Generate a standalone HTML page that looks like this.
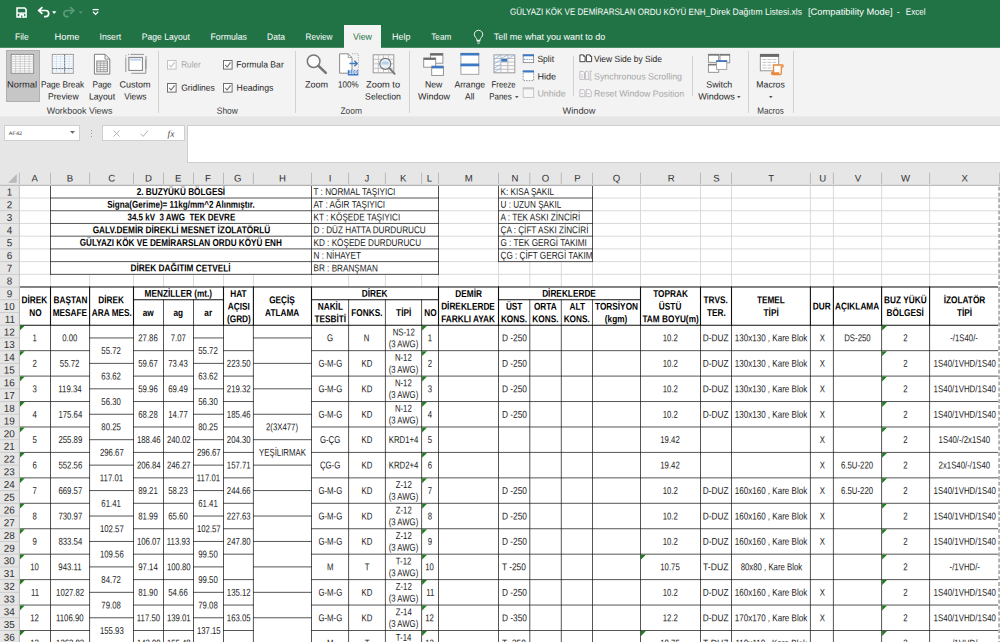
<!DOCTYPE html>
<html><head><meta charset="utf-8"><title>Excel</title>
<style>
html,body{margin:0;padding:0;}
body{width:1000px;height:642px;overflow:hidden;position:relative;background:#e6e6e6;font-family:"Liberation Sans",sans-serif;}
div{box-sizing:border-box;}
svg{position:absolute;overflow:visible;}
</style></head><body>
<div style="position:absolute;left:0.00px;top:0.00px;width:1000.00px;height:47.00px;background:#217346;"></div>
<div style="position:absolute;left:510px;top:1px;width:400px;height:20px;text-align:left;font-size:9.0px;line-height:20px;color:#fff;white-space:pre;"><span style="display:inline-block;transform:translate(0.00px,0.80px) scaleX(0.8918) rotate(0.03deg);transform-origin:left center">GÜLYAZI KÖK VE DEMİRARSLAN ORDU KÖYÜ ENH</span></div>
<div style="position:absolute;left:705px;top:1px;width:400px;height:20px;text-align:left;font-size:9.0px;line-height:20px;color:#fff;white-space:pre;"><span style="display:inline-block;transform:translate(0.50px,0.80px) scaleX(0.9505) rotate(0.03deg);transform-origin:left center">_Direk Dağıtım Listesi.xls</span></div>
<div style="position:absolute;left:808px;top:1px;width:400px;height:20px;text-align:left;font-size:9.0px;line-height:20px;color:#fff;white-space:pre;"><span style="display:inline-block;transform:translate(0.00px,0.80px) scaleX(1.0365) rotate(0.03deg);transform-origin:left center">[Compatibility Mode]</span></div>
<div style="position:absolute;left:896px;top:1px;width:400px;height:20px;text-align:left;font-size:9.0px;line-height:20px;color:#fff;white-space:pre;"><span style="display:inline-block;transform:translate(0.80px,0.80px) scaleX(1.0000) rotate(0.03deg);transform-origin:left center">-</span></div>
<div style="position:absolute;left:905px;top:1px;width:400px;height:20px;text-align:left;font-size:9.0px;line-height:20px;color:#fff;white-space:pre;"><span style="display:inline-block;transform:translate(0.80px,0.80px) scaleX(0.8951) rotate(0.03deg);transform-origin:left center">Excel</span></div>
<div style="position:absolute;left:15px;top:26px;width:400px;height:20px;text-align:left;font-size:9.0px;line-height:20px;color:#fff;white-space:pre;"><span style="display:inline-block;transform:translate(0.00px,0.70px) scaleX(0.9482) rotate(0.03deg);transform-origin:left center">File</span></div>
<div style="position:absolute;left:54px;top:26px;width:400px;height:20px;text-align:left;font-size:9.0px;line-height:20px;color:#fff;white-space:pre;"><span style="display:inline-block;transform:translate(0.50px,0.70px) scaleX(1.0414) rotate(0.03deg);transform-origin:left center">Home</span></div>
<div style="position:absolute;left:99px;top:26px;width:400px;height:20px;text-align:left;font-size:9.0px;line-height:20px;color:#fff;white-space:pre;"><span style="display:inline-block;transform:translate(0.50px,0.70px) scaleX(0.9664) rotate(0.03deg);transform-origin:left center">Insert</span></div>
<div style="position:absolute;left:141px;top:26px;width:400px;height:20px;text-align:left;font-size:9.0px;line-height:20px;color:#fff;white-space:pre;"><span style="display:inline-block;transform:translate(0.75px,0.70px) scaleX(0.9547) rotate(0.03deg);transform-origin:left center">Page Layout</span></div>
<div style="position:absolute;left:210px;top:26px;width:400px;height:20px;text-align:left;font-size:9.0px;line-height:20px;color:#fff;white-space:pre;"><span style="display:inline-block;transform:translate(0.50px,0.70px) scaleX(0.9732) rotate(0.03deg);transform-origin:left center">Formulas</span></div>
<div style="position:absolute;left:267px;top:26px;width:400px;height:20px;text-align:left;font-size:9.0px;line-height:20px;color:#fff;white-space:pre;"><span style="display:inline-block;transform:translate(0.00px,0.70px) scaleX(0.9469) rotate(0.03deg);transform-origin:left center">Data</span></div>
<div style="position:absolute;left:305px;top:26px;width:400px;height:20px;text-align:left;font-size:9.0px;line-height:20px;color:#fff;white-space:pre;"><span style="display:inline-block;transform:translate(0.50px,0.70px) scaleX(0.9150) rotate(0.03deg);transform-origin:left center">Review</span></div>
<div style="position:absolute;left:392px;top:26px;width:400px;height:20px;text-align:left;font-size:9.0px;line-height:20px;color:#fff;white-space:pre;"><span style="display:inline-block;transform:translate(0.00px,0.70px) scaleX(0.9995) rotate(0.03deg);transform-origin:left center">Help</span></div>
<div style="position:absolute;left:431px;top:26px;width:400px;height:20px;text-align:left;font-size:9.0px;line-height:20px;color:#fff;white-space:pre;"><span style="display:inline-block;transform:translate(0.25px,0.70px) scaleX(0.9088) rotate(0.03deg);transform-origin:left center">Team</span></div>
<div style="position:absolute;left:344.00px;top:25.00px;width:37.00px;height:23.00px;background:#f3f3f3;"></div>
<div style="position:absolute;left:353px;top:26px;width:400px;height:20px;text-align:left;font-size:9.0px;line-height:20px;color:#217346;white-space:pre;"><span style="display:inline-block;transform:translate(0.00px,0.70px) scaleX(0.9822) rotate(0.03deg);transform-origin:left center">View</span></div>
<div style="position:absolute;left:493px;top:26px;width:400px;height:20px;text-align:left;font-size:9.0px;line-height:20px;color:#fff;white-space:pre;"><span style="display:inline-block;transform:translate(0.75px,0.70px) scaleX(1.0040) rotate(0.03deg);transform-origin:left center">Tell me what you want to do</span></div>
<svg style="left:0.00px;top:24.00px" width="600" height="24" viewBox="0 23.3 600 24"><path d="M476.8 39.6v-1c0-1.3-2.5-2.4-2.5-4.8a4.2 4.2 0 0 1 8.4 0c0 2.4-2.5 3.5-2.5 4.8v1z" fill="none" stroke="#eef5f0" stroke-width="1"/><path d="M476.8 40.3h3.4" stroke="#fff" stroke-width="1.3"/><path d="M477.3 42.4h2.4" stroke="#fff" stroke-width="0.9"/></svg>
<svg style="left:0.00px;top:0.00px" width="110" height="24" viewBox="0 0 110 24"><path d="M17 7.9h7.6l1.5 1.5v7.7H17z" fill="none" stroke="#fff" stroke-width="1.5"/><path d="M17 13.1h9" stroke="#fff" stroke-width="1.4"/><path d="M19.4 8v3.2h4.8V8" fill="none" stroke="#fff" stroke-width="0"/><rect x="19.3" y="13.6" width="4.9" height="3.9" fill="#fff"/><rect x="21.2" y="15.4" width="1.2" height="2.2" fill="#217346"/><path d="M42.4 7.2L38.7 10.5l3.7 3.3" fill="none" stroke="#fff" stroke-width="1.7"/><path d="M39 10.5h6.6a3.1 3.1 0 0 1 0 6.2h-1.6" fill="none" stroke="#fff" stroke-width="1.7"/><path d="M52 11.2h4.4l-2.2 2.7z" fill="#fff"/><path d="M70.2 7.2l3.7 3.3-3.7 3.3" fill="none" stroke="#5b9b7a" stroke-width="1.7"/><path d="M73.6 10.5H67a3.1 3.1 0 0 0 0 6.2h1.6" fill="none" stroke="#5b9b7a" stroke-width="1.7"/><path d="M78.6 11.2H83l-2.2 2.7z" fill="#4f9270"/><path d="M92.6 9.6h6" stroke="#fff" stroke-width="1.3"/><path d="M93 11.8l2.6 2.6 2.6-2.6" fill="none" stroke="#fff" stroke-width="1.25"/></svg>
<div style="position:absolute;left:0.00px;top:47.00px;width:1000.00px;height:69.00px;background:#f3f3f3;"></div>
<div style="position:absolute;left:0.00px;top:47.00px;width:1000.00px;height:1.00px;background:#4b8d69;"></div>
<div style="position:absolute;left:344.00px;top:47.00px;width:37.00px;height:1.00px;background:#f3f3f3;"></div>
<div style="position:absolute;left:0.00px;top:116.00px;width:1000.00px;height:1.00px;background:#eaeaea;"></div>
<div style="position:absolute;left:6.00px;top:50.00px;width:33.60px;height:51.60px;background:#c6c6c6;border:1px solid #b0b0b0;"></div>
<div style="position:absolute;left:-178px;top:74px;width:400px;height:20px;text-align:center;font-size:9.0px;line-height:20px;color:#262626;white-space:pre;"><span style="display:inline-block;transform:translate(0.60px,0.50px) scaleX(1.0344) rotate(0.03deg);transform-origin:center center">Normal</span></div>
<div style="position:absolute;left:-137px;top:74px;width:400px;height:20px;text-align:center;font-size:9.0px;line-height:20px;color:#262626;white-space:pre;"><span style="display:inline-block;transform:translate(0.00px,0.50px) scaleX(0.9186) rotate(0.03deg);transform-origin:center center">Page Break</span></div>
<div style="position:absolute;left:-137px;top:86px;width:400px;height:20px;text-align:center;font-size:9.0px;line-height:20px;color:#262626;white-space:pre;"><span style="display:inline-block;transform:translate(0.30px,0.40px) scaleX(0.9560) rotate(0.03deg);transform-origin:center center">Preview</span></div>
<div style="position:absolute;left:-98px;top:74px;width:400px;height:20px;text-align:center;font-size:9.0px;line-height:20px;color:#262626;white-space:pre;"><span style="display:inline-block;transform:translate(0.50px,0.50px) scaleX(0.9040) rotate(0.03deg);transform-origin:center center">Page</span></div>
<div style="position:absolute;left:-98px;top:86px;width:400px;height:20px;text-align:center;font-size:9.0px;line-height:20px;color:#262626;white-space:pre;"><span style="display:inline-block;transform:translate(0.50px,0.40px) scaleX(0.9697) rotate(0.03deg);transform-origin:center center">Layout</span></div>
<div style="position:absolute;left:-65px;top:74px;width:400px;height:20px;text-align:center;font-size:9.0px;line-height:20px;color:#262626;white-space:pre;"><span style="display:inline-block;transform:translate(0.50px,0.50px) scaleX(0.9998) rotate(0.03deg);transform-origin:center center">Custom</span></div>
<div style="position:absolute;left:-65px;top:86px;width:400px;height:20px;text-align:center;font-size:9.0px;line-height:20px;color:#262626;white-space:pre;"><span style="display:inline-block;transform:translate(0.50px,0.40px) scaleX(0.9310) rotate(0.03deg);transform-origin:center center">Views</span></div>
<div style="position:absolute;left:-121px;top:100px;width:400px;height:20px;text-align:center;font-size:9.0px;line-height:20px;color:#383838;white-space:pre;"><span style="display:inline-block;transform:translate(0.20px,0.80px) scaleX(0.9836) rotate(0.03deg);transform-origin:center center">Workbook Views</span></div>
<div style="position:absolute;left:158.40px;top:51.00px;width:1.00px;height:62.00px;background:#d2d2d2;"></div>
<svg style="left:167.20px;top:59.50px" width="9.6" height="9.6" viewBox="0 0 10 10"><rect x="0.5" y="0.5" width="9" height="9" fill="#fdfdfd" stroke="#c0c0c0" stroke-width="1"/><path d="M2.3 5.2l2 2.1 3.6-4.8" fill="none" stroke="#c0c0c0" stroke-width="1.1"/></svg>
<svg style="left:167.20px;top:82.70px" width="9.6" height="9.6" viewBox="0 0 10 10"><rect x="0.5" y="0.5" width="9" height="9" fill="#fdfdfd" stroke="#6a6a6a" stroke-width="1"/><path d="M2.3 5.2l2 2.1 3.6-4.8" fill="none" stroke="#6a6a6a" stroke-width="1.1"/></svg>
<svg style="left:223.00px;top:59.50px" width="9.6" height="9.6" viewBox="0 0 10 10"><rect x="0.5" y="0.5" width="9" height="9" fill="#fdfdfd" stroke="#6a6a6a" stroke-width="1"/><path d="M2.3 5.2l2 2.1 3.6-4.8" fill="none" stroke="#6a6a6a" stroke-width="1.1"/></svg>
<svg style="left:223.00px;top:82.70px" width="9.6" height="9.6" viewBox="0 0 10 10"><rect x="0.5" y="0.5" width="9" height="9" fill="#fdfdfd" stroke="#6a6a6a" stroke-width="1"/><path d="M2.3 5.2l2 2.1 3.6-4.8" fill="none" stroke="#6a6a6a" stroke-width="1.1"/></svg>
<div style="position:absolute;left:-9px;top:54px;width:400px;height:20px;text-align:center;font-size:9.0px;line-height:20px;color:#a6a6a6;white-space:pre;"><span style="display:inline-block;transform:translate(0.20px,0.50px) scaleX(0.9114) rotate(0.03deg);transform-origin:center center">Ruler</span></div>
<div style="position:absolute;left:-2px;top:77px;width:400px;height:20px;text-align:center;font-size:9.0px;line-height:20px;color:#262626;white-space:pre;"><span style="display:inline-block;transform:translate(0.20px,0.70px) scaleX(0.9462) rotate(0.03deg);transform-origin:center center">Gridlines</span></div>
<div style="position:absolute;left:60px;top:54px;width:400px;height:20px;text-align:center;font-size:9.0px;line-height:20px;color:#262626;white-space:pre;"><span style="display:inline-block;transform:translate(0.30px,0.50px) scaleX(0.9574) rotate(0.03deg);transform-origin:center center">Formula Bar</span></div>
<div style="position:absolute;left:55px;top:77px;width:400px;height:20px;text-align:center;font-size:9.0px;line-height:20px;color:#262626;white-space:pre;"><span style="display:inline-block;transform:translate(0.00px,0.70px) scaleX(0.9678) rotate(0.03deg);transform-origin:center center">Headings</span></div>
<div style="position:absolute;left:27px;top:100px;width:400px;height:20px;text-align:center;font-size:9.0px;line-height:20px;color:#383838;white-space:pre;"><span style="display:inline-block;transform:translate(0.10px,0.80px) scaleX(0.9328) rotate(0.03deg);transform-origin:center center">Show</span></div>
<div style="position:absolute;left:294.70px;top:51.00px;width:1.00px;height:62.00px;background:#d2d2d2;"></div>
<div style="position:absolute;left:117px;top:74px;width:400px;height:20px;text-align:center;font-size:9.0px;line-height:20px;color:#262626;white-space:pre;"><span style="display:inline-block;transform:translate(0.00px,0.50px) scaleX(1.0085) rotate(0.03deg);transform-origin:center center">Zoom</span></div>
<div style="position:absolute;left:148px;top:74px;width:400px;height:20px;text-align:center;font-size:9.0px;line-height:20px;color:#262626;white-space:pre;"><span style="display:inline-block;transform:translate(0.80px,0.50px) scaleX(0.8863) rotate(0.03deg);transform-origin:center center">100%</span></div>
<div style="position:absolute;left:183px;top:74px;width:400px;height:20px;text-align:center;font-size:9.0px;line-height:20px;color:#262626;white-space:pre;"><span style="display:inline-block;transform:translate(0.60px,0.50px) scaleX(1.0300) rotate(0.03deg);transform-origin:center center">Zoom to</span></div>
<div style="position:absolute;left:183px;top:86px;width:400px;height:20px;text-align:center;font-size:9.0px;line-height:20px;color:#262626;white-space:pre;"><span style="display:inline-block;transform:translate(0.50px,0.40px) scaleX(0.9670) rotate(0.03deg);transform-origin:center center">Selection</span></div>
<div style="position:absolute;left:151px;top:100px;width:400px;height:20px;text-align:center;font-size:9.0px;line-height:20px;color:#383838;white-space:pre;"><span style="display:inline-block;transform:translate(0.70px,0.80px) scaleX(0.9303) rotate(0.03deg);transform-origin:center center">Zoom</span></div>
<div style="position:absolute;left:409.10px;top:51.00px;width:1.00px;height:62.00px;background:#d2d2d2;"></div>
<div style="position:absolute;left:233px;top:74px;width:400px;height:20px;text-align:center;font-size:9.0px;line-height:20px;color:#262626;white-space:pre;"><span style="display:inline-block;transform:translate(0.70px,0.50px) scaleX(0.9664) rotate(0.03deg);transform-origin:center center">New</span></div>
<div style="position:absolute;left:234px;top:86px;width:400px;height:20px;text-align:center;font-size:9.0px;line-height:20px;color:#262626;white-space:pre;"><span style="display:inline-block;transform:translate(0.00px,0.40px) scaleX(0.9997) rotate(0.03deg);transform-origin:center center">Window</span></div>
<div style="position:absolute;left:269px;top:74px;width:400px;height:20px;text-align:center;font-size:9.0px;line-height:20px;color:#262626;white-space:pre;"><span style="display:inline-block;transform:translate(0.70px,0.50px) scaleX(0.9558) rotate(0.03deg);transform-origin:center center">Arrange</span></div>
<div style="position:absolute;left:269px;top:86px;width:400px;height:20px;text-align:center;font-size:9.0px;line-height:20px;color:#262626;white-space:pre;"><span style="display:inline-block;transform:translate(0.70px,0.40px) scaleX(0.9398) rotate(0.03deg);transform-origin:center center">All</span></div>
<div style="position:absolute;left:303px;top:74px;width:400px;height:20px;text-align:center;font-size:9.0px;line-height:20px;color:#262626;white-space:pre;"><span style="display:inline-block;transform:translate(0.60px,0.50px) scaleX(0.8569) rotate(0.03deg);transform-origin:center center">Freeze</span></div>
<div style="position:absolute;left:300px;top:86px;width:400px;height:20px;text-align:center;font-size:9.0px;line-height:20px;color:#262626;white-space:pre;"><span style="display:inline-block;transform:translate(0.70px,0.40px) scaleX(0.8857) rotate(0.03deg);transform-origin:center center">Panes</span></div>
<svg style="left:514.50px;top:95.50px" width="4" height="3" viewBox="0 0 4 3"><path d="M0 0h3.6L1.8 2.2z" fill="#555"/></svg>
<div style="position:absolute;left:537px;top:48px;width:400px;height:20px;text-align:left;font-size:9.0px;line-height:20px;color:#262626;white-space:pre;"><span style="display:inline-block;transform:translate(0.40px,0.90px) scaleX(0.9481) rotate(0.03deg);transform-origin:left center">Split</span></div>
<div style="position:absolute;left:537px;top:66px;width:400px;height:20px;text-align:left;font-size:9.0px;line-height:20px;color:#262626;white-space:pre;"><span style="display:inline-block;transform:translate(0.40px,0.40px) scaleX(1.0049) rotate(0.03deg);transform-origin:left center">Hide</span></div>
<div style="position:absolute;left:537px;top:83px;width:400px;height:20px;text-align:left;font-size:9.0px;line-height:20px;color:#a6a6a6;white-space:pre;"><span style="display:inline-block;transform:translate(0.40px,0.60px) scaleX(0.9888) rotate(0.03deg);transform-origin:left center">Unhide</span></div>
<div style="position:absolute;left:573.10px;top:56.00px;width:1.00px;height:40.00px;background:#d2d2d2;"></div>
<div style="position:absolute;left:594px;top:48px;width:400px;height:20px;text-align:left;font-size:9.0px;line-height:20px;color:#262626;white-space:pre;"><span style="display:inline-block;transform:translate(0.00px,0.90px) scaleX(0.9395) rotate(0.03deg);transform-origin:left center">View Side by Side</span></div>
<div style="position:absolute;left:594px;top:66px;width:400px;height:20px;text-align:left;font-size:9.0px;line-height:20px;color:#a6a6a6;white-space:pre;"><span style="display:inline-block;transform:translate(0.00px,0.40px) scaleX(0.9828) rotate(0.03deg);transform-origin:left center">Synchronous Scrolling</span></div>
<div style="position:absolute;left:594px;top:83px;width:400px;height:20px;text-align:left;font-size:9.0px;line-height:20px;color:#a6a6a6;white-space:pre;"><span style="display:inline-block;transform:translate(0.00px,0.60px) scaleX(0.9726) rotate(0.03deg);transform-origin:left center">Reset Window Position</span></div>
<div style="position:absolute;left:378px;top:100px;width:400px;height:20px;text-align:center;font-size:9.0px;line-height:20px;color:#383838;white-space:pre;"><span style="display:inline-block;transform:translate(0.90px,0.80px) scaleX(1.0310) rotate(0.03deg);transform-origin:center center">Window</span></div>
<div style="position:absolute;left:692.10px;top:56.00px;width:1.00px;height:40.00px;background:#d2d2d2;"></div>
<div style="position:absolute;left:519px;top:74px;width:400px;height:20px;text-align:center;font-size:9.0px;line-height:20px;color:#262626;white-space:pre;"><span style="display:inline-block;transform:translate(0.00px,0.50px) scaleX(0.9808) rotate(0.03deg);transform-origin:center center">Switch</span></div>
<div style="position:absolute;left:516px;top:86px;width:400px;height:20px;text-align:center;font-size:9.0px;line-height:20px;color:#262626;white-space:pre;"><span style="display:inline-block;transform:translate(0.30px,0.40px) scaleX(1.0025) rotate(0.03deg);transform-origin:center center">Windows</span></div>
<svg style="left:737.00px;top:95.50px" width="4" height="3" viewBox="0 0 4 3"><path d="M0 0h3.6L1.8 2.2z" fill="#555"/></svg>
<div style="position:absolute;left:747.90px;top:51.00px;width:1.00px;height:62.00px;background:#d2d2d2;"></div>
<div style="position:absolute;left:570px;top:74px;width:400px;height:20px;text-align:center;font-size:9.0px;line-height:20px;color:#262626;white-space:pre;"><span style="display:inline-block;transform:translate(0.80px,0.50px) scaleX(0.9626) rotate(0.03deg);transform-origin:center center">Macros</span></div>
<svg style="left:768.60px;top:95.50px" width="4" height="3" viewBox="0 0 4 3"><path d="M0 0h3.6L1.8 2.2z" fill="#555"/></svg>
<div style="position:absolute;left:570px;top:100px;width:400px;height:20px;text-align:center;font-size:9.0px;line-height:20px;color:#383838;white-space:pre;"><span style="display:inline-block;transform:translate(0.70px,0.80px) scaleX(0.9016) rotate(0.03deg);transform-origin:center center">Macros</span></div>
<div style="position:absolute;left:792.90px;top:51.00px;width:1.00px;height:62.00px;background:#d2d2d2;"></div>
<div style="position:absolute;left:4.00px;top:125.00px;width:76.00px;height:16.00px;background:#fff;border:1px solid #cfcfcf;"></div>
<div style="position:absolute;left:8px;top:122px;width:400px;height:20px;text-align:left;font-size:5.2px;line-height:20px;color:#444;white-space:pre;"><span style="display:inline-block;transform:translate(0.75px,0.99px) scaleX(1.0863) rotate(0.03deg);transform-origin:left center">AF42</span></div>
<svg style="left:69.60px;top:131.20px" width="6" height="4" viewBox="0 0 6 4"><path d="M0 0h5L2.5 2.8z" fill="#666"/></svg>
<div style="position:absolute;left:90.80px;top:129.50px;width:1.00px;height:1.00px;background:#9a9a9a;"></div>
<div style="position:absolute;left:90.80px;top:132.50px;width:1.00px;height:1.00px;background:#9a9a9a;"></div>
<div style="position:absolute;left:90.80px;top:135.50px;width:1.00px;height:1.00px;background:#9a9a9a;"></div>
<div style="position:absolute;left:102.00px;top:125.00px;width:83.00px;height:16.00px;background:#fff;border:1px solid #cfcfcf;"></div>
<svg style="left:112.50px;top:129.50px" width="7" height="7" viewBox="0 0 7 7"><path d="M0.5 0.5l6 6M6.5 0.5l-6 6" stroke="#b0b0b0" stroke-width="1"/></svg>
<svg style="left:139.50px;top:129.50px" width="9" height="7" viewBox="0 0 9 7"><path d="M0.5 3.8l2.6 2.6L8 0.6" fill="none" stroke="#b0b0b0" stroke-width="1"/></svg>
<div style="position:absolute;left:167px;top:123px;width:400px;height:20px;text-align:left;font-size:9.4px;line-height:20px;color:#444;white-space:pre;font-style:italic;font-family:'Liberation Serif',serif;"><span style="display:inline-block;transform:translate(0.60px,0.83px) scaleX(1.0000) rotate(0.03deg);transform-origin:left center">fx</span></div>
<div style="position:absolute;left:187.00px;top:125.00px;width:813.00px;height:38.00px;background:#fff;border:1px solid #cfcfcf;border-right:none;"></div>
<svg style="left:0;top:0" width="1000" height="130" viewBox="0 0 1000 130"><rect x="11.20" y="54.40" width="22.40" height="18.90" fill="#fff" stroke="#8c8c8c" stroke-width="1" /><line x1="15.68" y1="54.40" x2="15.68" y2="73.30" stroke="#c4c4c4" stroke-width="0.8" /><line x1="20.16" y1="54.40" x2="20.16" y2="73.30" stroke="#c4c4c4" stroke-width="0.8" /><line x1="24.64" y1="54.40" x2="24.64" y2="73.30" stroke="#c4c4c4" stroke-width="0.8" /><line x1="29.12" y1="54.40" x2="29.12" y2="73.30" stroke="#c4c4c4" stroke-width="0.8" /><line x1="11.20" y1="56.76" x2="33.60" y2="56.76" stroke="#c4c4c4" stroke-width="0.8" /><line x1="11.20" y1="59.12" x2="33.60" y2="59.12" stroke="#c4c4c4" stroke-width="0.8" /><line x1="11.20" y1="61.49" x2="33.60" y2="61.49" stroke="#c4c4c4" stroke-width="0.8" /><line x1="11.20" y1="63.85" x2="33.60" y2="63.85" stroke="#c4c4c4" stroke-width="0.8" /><line x1="11.20" y1="66.21" x2="33.60" y2="66.21" stroke="#c4c4c4" stroke-width="0.8" /><line x1="11.20" y1="68.58" x2="33.60" y2="68.58" stroke="#c4c4c4" stroke-width="0.8" /><line x1="11.20" y1="70.94" x2="33.60" y2="70.94" stroke="#c4c4c4" stroke-width="0.8" /><rect x="52.30" y="54.40" width="21.00" height="18.90" fill="#fff" stroke="#9a9a9a" stroke-width="1" /><line x1="56.50" y1="54.40" x2="56.50" y2="73.30" stroke="#cfdff2" stroke-width="0.8" /><line x1="60.70" y1="54.40" x2="60.70" y2="73.30" stroke="#cfdff2" stroke-width="0.8" /><line x1="64.90" y1="54.40" x2="64.90" y2="73.30" stroke="#cfdff2" stroke-width="0.8" /><line x1="69.10" y1="54.40" x2="69.10" y2="73.30" stroke="#cfdff2" stroke-width="0.8" /><line x1="52.30" y1="56.76" x2="73.30" y2="56.76" stroke="#cfdff2" stroke-width="0.8" /><line x1="52.30" y1="59.12" x2="73.30" y2="59.12" stroke="#cfdff2" stroke-width="0.8" /><line x1="52.30" y1="61.49" x2="73.30" y2="61.49" stroke="#cfdff2" stroke-width="0.8" /><line x1="52.30" y1="63.85" x2="73.30" y2="63.85" stroke="#cfdff2" stroke-width="0.8" /><line x1="52.30" y1="66.21" x2="73.30" y2="66.21" stroke="#cfdff2" stroke-width="0.8" /><line x1="52.30" y1="68.58" x2="73.30" y2="68.58" stroke="#cfdff2" stroke-width="0.8" /><line x1="52.30" y1="70.94" x2="73.30" y2="70.94" stroke="#cfdff2" stroke-width="0.8" /><line x1="64.60" y1="54.40" x2="64.60" y2="73.30" stroke="#666" stroke-width="0.9" stroke-dasharray="2.2 0.8"/><line x1="52.30" y1="68.60" x2="73.30" y2="68.60" stroke="#666" stroke-width="0.9" stroke-dasharray="2.2 0.8"/><path d="M94.4 54.3h10.6l4.8 4.8v15H94.4z" fill="#fff" stroke="#7d7d7d" stroke-width="1" /><path d="M105 54.3v4.8h4.8" fill="none" stroke="#7d7d7d" stroke-width="0.9" /><rect x="96.80" y="61.00" width="10.60" height="10.80" fill="#f0f0f0" stroke="#8a8a8a" stroke-width="1" /><line x1="100.33" y1="61.00" x2="100.33" y2="71.80" stroke="#a0a0a0" stroke-width="0.8" /><line x1="103.87" y1="61.00" x2="103.87" y2="71.80" stroke="#a0a0a0" stroke-width="0.8" /><line x1="96.80" y1="63.16" x2="107.40" y2="63.16" stroke="#a0a0a0" stroke-width="0.8" /><line x1="96.80" y1="65.32" x2="107.40" y2="65.32" stroke="#a0a0a0" stroke-width="0.8" /><line x1="96.80" y1="67.48" x2="107.40" y2="67.48" stroke="#a0a0a0" stroke-width="0.8" /><line x1="96.80" y1="69.64" x2="107.40" y2="69.64" stroke="#a0a0a0" stroke-width="0.8" /><path d="M125.8 55.2v1.2M125.8 57.5v14.5M128 54.4h1M130.5 54.4h13.5M146 56v13" fill="none" stroke="#8a8a8a" stroke-width="0.9" /><rect x="128.90" y="57.40" width="13.50" height="13.00" fill="#fff" stroke="#7d7d7d" stroke-width="1" /><rect x="130.30" y="58.60" width="10.70" height="2.00" fill="#bcd3ee" /><path d="M131.5 73.3h14.3v-14" fill="none" stroke="#8a8a8a" stroke-width="0.9" /><circle cx="313.6" cy="61.2" r="6.3" fill="#fbfbfb" stroke="#777" stroke-width="1.5"/><line x1="318.60" y1="66.00" x2="325.80" y2="72.90" stroke="#777" stroke-width="2.5" stroke-linecap="round"/><path d="M339.6 53.8h8.6l3.8 3.8v15.6h-12.4z" fill="#fff" stroke="#8a8a8a" stroke-width="1" /><path d="M348.2 53.8v3.8h3.8" fill="none" stroke="#8a8a8a" stroke-width="0.8" /><path d="M352 53.8h6.3v16" fill="none" stroke="#9a9a9a" stroke-width="0.8" stroke-dasharray="1.2 1.2"/><path d="M349.4 63.5h7.6M354.4 60.7l2.8 2.8-2.8 2.8" fill="none" stroke="#3c78c3" stroke-width="1.3" /><rect x="347.80" y="69.90" width="10.50" height="5.60" fill="#3c78c3" /><text x="353.05" y="74.4" font-family="Liberation Sans, sans-serif" font-size="5.4" font-weight="bold" fill="#fff" text-anchor="middle">100</text><rect x="373.20" y="54.80" width="20.60" height="18.00" fill="#fafafa" stroke="#9a9a9a" stroke-width="1" /><line x1="378.35" y1="54.80" x2="378.35" y2="72.80" stroke="#b5b5b5" stroke-width="0.8" /><line x1="383.50" y1="54.80" x2="383.50" y2="72.80" stroke="#b5b5b5" stroke-width="0.8" /><line x1="388.65" y1="54.80" x2="388.65" y2="72.80" stroke="#b5b5b5" stroke-width="0.8" /><line x1="373.20" y1="59.30" x2="393.80" y2="59.30" stroke="#b5b5b5" stroke-width="0.8" /><line x1="373.20" y1="63.80" x2="393.80" y2="63.80" stroke="#b5b5b5" stroke-width="0.8" /><line x1="373.20" y1="68.30" x2="393.80" y2="68.30" stroke="#b5b5b5" stroke-width="0.8" /><circle cx="385.3" cy="63.9" r="5.5" fill="#e9f0f8" stroke="#777" stroke-width="1.2"/><path d="M381.2 64.5a4.2 4.2 0 0 1 8.2 0z" fill="#b9d0ea" /><line x1="389.40" y1="68.20" x2="394.60" y2="73.80" stroke="#777" stroke-width="1.9" stroke-linecap="round"/><rect x="430.40" y="53.60" width="12.50" height="9.60" fill="#fff" stroke="#8a8a8a" stroke-width="0.9" /><rect x="430.40" y="53.30" width="12.50" height="2.30" fill="#6a6a6a" /><rect x="423.70" y="58.10" width="12.00" height="9.10" fill="#fff" stroke="#8a8a8a" stroke-width="0.9" /><rect x="423.70" y="57.80" width="12.00" height="2.10" fill="#6a6a6a" /><rect x="431.70" y="66.20" width="11.70" height="9.20" fill="#fff" stroke="#8a8a8a" stroke-width="0.9" /><rect x="431.70" y="65.90" width="11.70" height="2.50" fill="#3c78c3" /><rect x="460.90" y="53.30" width="17.90" height="21.00" fill="#fff" stroke="#9a9a9a" stroke-width="0.9" /><rect x="460.50" y="53.00" width="18.70" height="2.50" fill="#3c78c3" /><rect x="460.50" y="63.50" width="18.70" height="2.80" fill="#3c78c3" /><rect x="494.00" y="54.90" width="20.80" height="17.90" fill="#fbfbfb" stroke="#9a9a9a" stroke-width="1" /><line x1="500.93" y1="54.90" x2="500.93" y2="72.80" stroke="#b0b0b0" stroke-width="0.8" /><line x1="507.87" y1="54.90" x2="507.87" y2="72.80" stroke="#b0b0b0" stroke-width="0.8" /><line x1="494.00" y1="58.48" x2="514.80" y2="58.48" stroke="#b0b0b0" stroke-width="0.8" /><line x1="494.00" y1="62.06" x2="514.80" y2="62.06" stroke="#b0b0b0" stroke-width="0.8" /><line x1="494.00" y1="65.64" x2="514.80" y2="65.64" stroke="#b0b0b0" stroke-width="0.8" /><line x1="494.00" y1="69.22" x2="514.80" y2="69.22" stroke="#b0b0b0" stroke-width="0.8" /><path d="M494 59.5l6.9-4.6M494 64l6.9-4.6M494 68.5l6.9-4.6M494 72.5l6.9-4.6M501 58.5l6.9-3.6M508 58.5l6.9-3.6" fill="none" stroke="#8db4e2" stroke-width="0.8" /><rect x="501.30" y="58.90" width="5.90" height="2.80" fill="#3c78c3" /><rect x="523.20" y="54.80" width="10.40" height="7.80" fill="#fff" stroke="#8a8a8a" stroke-width="0.9" /><rect x="522.80" y="54.40" width="11.20" height="1.90" fill="#3c78c3" /><line x1="524.00" y1="59.40" x2="533.00" y2="59.40" stroke="#3c78c3" stroke-width="0.8" stroke-dasharray="1.4 1"/><rect x="523.20" y="71.00" width="10.40" height="9.60" fill="#fff" stroke="#8a8a8a" stroke-width="0.9" stroke-dasharray="1.5 1.1"/><rect x="522.80" y="70.40" width="11.20" height="2.10" fill="#3c78c3" /><rect x="523.20" y="88.00" width="10.40" height="9.40" fill="#f7f7f7" stroke="#c2c2c2" stroke-width="0.9" /><rect x="522.80" y="87.50" width="11.20" height="1.90" fill="#c6c6c6" /><path d="M579.9 54.9h3.6l1.6 1.6v5.2h-5.2zM586.4 54.9h3.6l1.6 1.6v5.2h-5.2z" fill="#fff" stroke="#444" stroke-width="1.0" /><path d="M583.5 54.9v1.6h1.6M590 54.9v1.6h1.6" fill="none" stroke="#444" stroke-width="0.7" /><path d="M579.9 71.4h3.2l1.4 1.4v6.6h-4.6zM585.4 71.4h2.2l1.2 1.4v6.6h-3.4z" fill="#f6f6f6" stroke="#c4bcc4" stroke-width="1.0" /><path d="M581 75h2.4M581 77h2.4" fill="none" stroke="#c8c8c8" stroke-width="0.8" /><path d="M590.6 70.4v10.4M589.4 71.8l1.2-1.4 1.2 1.4M589.4 79.4l1.2 1.4 1.2-1.4" fill="none" stroke="#c0c0c0" stroke-width="0.8" /><path d="M579.9 89.6h3.4l1.6 1.5v5.6h-5zM586.2 89.6h3.4l1.6 1.5v5.6h-5z" fill="#f6f6f6" stroke="#c4bcc4" stroke-width="1.0" /><path d="M581.2 93.6h2M587.4 93.6h2" fill="none" stroke="#c4c4c4" stroke-width="1.2" /><rect x="708.40" y="54.30" width="10.30" height="8.00" fill="#fff" stroke="#8a8a8a" stroke-width="0.9" /><rect x="708.10" y="54.00" width="10.90" height="1.70" fill="#7a7a7a" /><rect x="720.00" y="54.30" width="9.70" height="8.50" fill="#fff" stroke="#8a8a8a" stroke-width="0.9" /><rect x="719.70" y="54.00" width="10.30" height="1.70" fill="#7a7a7a" /><rect x="708.40" y="64.30" width="10.30" height="8.00" fill="#fff" stroke="#8a8a8a" stroke-width="0.9" /><rect x="708.10" y="64.00" width="10.90" height="1.50" fill="#7a7a7a" /><rect x="716.60" y="60.60" width="10.20" height="8.80" fill="#fff" stroke="#9a9a9a" stroke-width="0.9" /><rect x="716.30" y="60.30" width="10.80" height="1.70" fill="#3c78c3" /><rect x="760.30" y="54.30" width="18.40" height="16.50" fill="#fff" stroke="#8a8a8a" stroke-width="0.9" /><rect x="760.00" y="54.00" width="19.00" height="2.90" fill="#6a6a6a" /><line x1="762.40" y1="59.60" x2="776.60" y2="59.60" stroke="#b4b4b4" stroke-width="0.8" stroke-dasharray="4 1"/><line x1="762.40" y1="62.40" x2="776.60" y2="62.40" stroke="#b4b4b4" stroke-width="0.8" stroke-dasharray="4 1"/><line x1="762.40" y1="65.20" x2="776.60" y2="65.20" stroke="#b4b4b4" stroke-width="0.8" stroke-dasharray="4 1"/><line x1="762.40" y1="68.00" x2="776.60" y2="68.00" stroke="#b4b4b4" stroke-width="0.8" stroke-dasharray="4 1"/><path d="M773.6 65h8.6a1 1 0 0 1 0 2h-.9v6.2a1.4 1.4 0 0 1-1.4 1.4h-7a1.3 1.3 0 0 1 0-2.6h.7z" fill="#fff" stroke="#e8883a" stroke-width="1.3" /><path d="M772.6 72.2h6.8v2.2h-6.8a1.1 1.1 0 0 1 0-2.2z" fill="#e8883a" /></svg>
<div style="position:absolute;left:19.30px;top:185.30px;width:981.00px;height:456.70px;background:#fff;"></div>
<div style="position:absolute;left:0.00px;top:170.70px;width:1000.00px;height:14.60px;background:#e6e6e6;"></div>
<div style="position:absolute;left:0.00px;top:185.30px;width:19.30px;height:456.70px;background:#e6e6e6;"></div>
<svg style="left:0;top:0" width="1000" height="642" viewBox="0 0 1000 642"><line x1="19.30" y1="185.30" x2="1000.00" y2="185.30" stroke="#d6d6d6" stroke-width="0.9"/><line x1="19.30" y1="198.02" x2="1000.00" y2="198.02" stroke="#d6d6d6" stroke-width="0.9"/><line x1="19.30" y1="210.74" x2="1000.00" y2="210.74" stroke="#d6d6d6" stroke-width="0.9"/><line x1="19.30" y1="223.46" x2="1000.00" y2="223.46" stroke="#d6d6d6" stroke-width="0.9"/><line x1="19.30" y1="236.18" x2="1000.00" y2="236.18" stroke="#d6d6d6" stroke-width="0.9"/><line x1="19.30" y1="248.90" x2="1000.00" y2="248.90" stroke="#d6d6d6" stroke-width="0.9"/><line x1="19.30" y1="261.62" x2="1000.00" y2="261.62" stroke="#d6d6d6" stroke-width="0.9"/><line x1="19.30" y1="274.34" x2="1000.00" y2="274.34" stroke="#d6d6d6" stroke-width="0.9"/><line x1="19.30" y1="287.06" x2="1000.00" y2="287.06" stroke="#d6d6d6" stroke-width="0.9"/><line x1="50.50" y1="185.30" x2="50.50" y2="287.06" stroke="#d6d6d6" stroke-width="0.9"/><line x1="89.60" y1="185.30" x2="89.60" y2="287.06" stroke="#d6d6d6" stroke-width="0.9"/><line x1="133.50" y1="185.30" x2="133.50" y2="287.06" stroke="#d6d6d6" stroke-width="0.9"/><line x1="163.50" y1="185.30" x2="163.50" y2="287.06" stroke="#d6d6d6" stroke-width="0.9"/><line x1="193.50" y1="185.30" x2="193.50" y2="287.06" stroke="#d6d6d6" stroke-width="0.9"/><line x1="223.50" y1="185.30" x2="223.50" y2="287.06" stroke="#d6d6d6" stroke-width="0.9"/><line x1="253.40" y1="185.30" x2="253.40" y2="287.06" stroke="#d6d6d6" stroke-width="0.9"/><line x1="311.50" y1="185.30" x2="311.50" y2="287.06" stroke="#d6d6d6" stroke-width="0.9"/><line x1="348.60" y1="185.30" x2="348.60" y2="287.06" stroke="#d6d6d6" stroke-width="0.9"/><line x1="385.40" y1="185.30" x2="385.40" y2="287.06" stroke="#d6d6d6" stroke-width="0.9"/><line x1="421.60" y1="185.30" x2="421.60" y2="287.06" stroke="#d6d6d6" stroke-width="0.9"/><line x1="438.50" y1="185.30" x2="438.50" y2="287.06" stroke="#d6d6d6" stroke-width="0.9"/><line x1="498.50" y1="185.30" x2="498.50" y2="287.06" stroke="#d6d6d6" stroke-width="0.9"/><line x1="529.80" y1="185.30" x2="529.80" y2="287.06" stroke="#d6d6d6" stroke-width="0.9"/><line x1="561.30" y1="185.30" x2="561.30" y2="287.06" stroke="#d6d6d6" stroke-width="0.9"/><line x1="592.50" y1="185.30" x2="592.50" y2="287.06" stroke="#d6d6d6" stroke-width="0.9"/><line x1="640.50" y1="185.30" x2="640.50" y2="287.06" stroke="#d6d6d6" stroke-width="0.9"/><line x1="700.50" y1="185.30" x2="700.50" y2="287.06" stroke="#d6d6d6" stroke-width="0.9"/><line x1="731.50" y1="185.30" x2="731.50" y2="287.06" stroke="#d6d6d6" stroke-width="0.9"/><line x1="810.40" y1="185.30" x2="810.40" y2="287.06" stroke="#d6d6d6" stroke-width="0.9"/><line x1="833.40" y1="185.30" x2="833.40" y2="287.06" stroke="#d6d6d6" stroke-width="0.9"/><line x1="881.60" y1="185.30" x2="881.60" y2="287.06" stroke="#d6d6d6" stroke-width="0.9"/><line x1="929.60" y1="185.30" x2="929.60" y2="287.06" stroke="#d6d6d6" stroke-width="0.9"/><line x1="19.30" y1="172.70" x2="19.30" y2="185.30" stroke="#b4b4b4" stroke-width="0.9"/><line x1="50.50" y1="172.70" x2="50.50" y2="185.30" stroke="#b4b4b4" stroke-width="0.9"/><line x1="89.60" y1="172.70" x2="89.60" y2="185.30" stroke="#b4b4b4" stroke-width="0.9"/><line x1="133.50" y1="172.70" x2="133.50" y2="185.30" stroke="#b4b4b4" stroke-width="0.9"/><line x1="163.50" y1="172.70" x2="163.50" y2="185.30" stroke="#b4b4b4" stroke-width="0.9"/><line x1="193.50" y1="172.70" x2="193.50" y2="185.30" stroke="#b4b4b4" stroke-width="0.9"/><line x1="223.50" y1="172.70" x2="223.50" y2="185.30" stroke="#b4b4b4" stroke-width="0.9"/><line x1="253.40" y1="172.70" x2="253.40" y2="185.30" stroke="#b4b4b4" stroke-width="0.9"/><line x1="311.50" y1="172.70" x2="311.50" y2="185.30" stroke="#b4b4b4" stroke-width="0.9"/><line x1="348.60" y1="172.70" x2="348.60" y2="185.30" stroke="#b4b4b4" stroke-width="0.9"/><line x1="385.40" y1="172.70" x2="385.40" y2="185.30" stroke="#b4b4b4" stroke-width="0.9"/><line x1="421.60" y1="172.70" x2="421.60" y2="185.30" stroke="#b4b4b4" stroke-width="0.9"/><line x1="438.50" y1="172.70" x2="438.50" y2="185.30" stroke="#b4b4b4" stroke-width="0.9"/><line x1="498.50" y1="172.70" x2="498.50" y2="185.30" stroke="#b4b4b4" stroke-width="0.9"/><line x1="529.80" y1="172.70" x2="529.80" y2="185.30" stroke="#b4b4b4" stroke-width="0.9"/><line x1="561.30" y1="172.70" x2="561.30" y2="185.30" stroke="#b4b4b4" stroke-width="0.9"/><line x1="592.50" y1="172.70" x2="592.50" y2="185.30" stroke="#b4b4b4" stroke-width="0.9"/><line x1="640.50" y1="172.70" x2="640.50" y2="185.30" stroke="#b4b4b4" stroke-width="0.9"/><line x1="700.50" y1="172.70" x2="700.50" y2="185.30" stroke="#b4b4b4" stroke-width="0.9"/><line x1="731.50" y1="172.70" x2="731.50" y2="185.30" stroke="#b4b4b4" stroke-width="0.9"/><line x1="810.40" y1="172.70" x2="810.40" y2="185.30" stroke="#b4b4b4" stroke-width="0.9"/><line x1="833.40" y1="172.70" x2="833.40" y2="185.30" stroke="#b4b4b4" stroke-width="0.9"/><line x1="881.60" y1="172.70" x2="881.60" y2="185.30" stroke="#b4b4b4" stroke-width="0.9"/><line x1="929.60" y1="172.70" x2="929.60" y2="185.30" stroke="#b4b4b4" stroke-width="0.9"/><line x1="999.60" y1="172.70" x2="999.60" y2="185.30" stroke="#b4b4b4" stroke-width="0.9"/><line x1="0.00" y1="185.30" x2="1000.00" y2="185.30" stroke="#b4b4b4" stroke-width="0.9"/><path d="M16.8 182.70v-8.6l-8.6 8.6z" fill="#b9b9b9"/><rect x="50.50" y="185.90" width="261.00" height="88.44" fill="#fff"/><rect x="311.50" y="185.90" width="127.00" height="88.44" fill="#fff"/><rect x="498.50" y="185.90" width="94.00" height="75.72" fill="#fff"/><rect x="19.30" y="287.06" width="979.70" height="354.94" fill="#fff"/><line x1="19.30" y1="286.51" x2="19.30" y2="325.77" stroke="#111" stroke-width="1.1"/><line x1="19.30" y1="324.85" x2="19.30" y2="642.00" stroke="#1c1c1c" stroke-width="0.75"/><line x1="50.50" y1="184.93" x2="50.50" y2="274.72" stroke="#1c1c1c" stroke-width="0.75"/><line x1="50.50" y1="286.51" x2="50.50" y2="325.77" stroke="#111" stroke-width="1.1"/><line x1="50.50" y1="324.85" x2="50.50" y2="642.00" stroke="#1c1c1c" stroke-width="0.75"/><line x1="89.60" y1="286.51" x2="89.60" y2="325.77" stroke="#111" stroke-width="1.1"/><line x1="89.60" y1="324.85" x2="89.60" y2="642.00" stroke="#1c1c1c" stroke-width="0.75"/><line x1="133.50" y1="286.51" x2="133.50" y2="325.77" stroke="#111" stroke-width="1.1"/><line x1="133.50" y1="324.85" x2="133.50" y2="642.00" stroke="#1c1c1c" stroke-width="0.75"/><line x1="163.50" y1="299.41" x2="163.50" y2="642.00" stroke="#1c1c1c" stroke-width="0.75"/><line x1="193.50" y1="299.41" x2="193.50" y2="642.00" stroke="#1c1c1c" stroke-width="0.75"/><line x1="223.50" y1="286.51" x2="223.50" y2="325.77" stroke="#111" stroke-width="1.1"/><line x1="223.50" y1="324.85" x2="223.50" y2="642.00" stroke="#1c1c1c" stroke-width="0.75"/><line x1="253.40" y1="286.51" x2="253.40" y2="325.77" stroke="#111" stroke-width="1.1"/><line x1="253.40" y1="324.85" x2="253.40" y2="642.00" stroke="#1c1c1c" stroke-width="0.75"/><line x1="311.50" y1="184.93" x2="311.50" y2="274.72" stroke="#1c1c1c" stroke-width="0.75"/><line x1="311.50" y1="286.51" x2="311.50" y2="325.77" stroke="#111" stroke-width="1.1"/><line x1="311.50" y1="324.85" x2="311.50" y2="642.00" stroke="#1c1c1c" stroke-width="0.75"/><line x1="348.60" y1="299.41" x2="348.60" y2="642.00" stroke="#1c1c1c" stroke-width="0.75"/><line x1="385.40" y1="299.41" x2="385.40" y2="642.00" stroke="#1c1c1c" stroke-width="0.75"/><line x1="421.60" y1="299.41" x2="421.60" y2="642.00" stroke="#1c1c1c" stroke-width="0.75"/><line x1="438.50" y1="184.93" x2="438.50" y2="274.72" stroke="#1c1c1c" stroke-width="0.75"/><line x1="438.50" y1="286.51" x2="438.50" y2="325.77" stroke="#111" stroke-width="1.1"/><line x1="438.50" y1="324.85" x2="438.50" y2="642.00" stroke="#1c1c1c" stroke-width="0.75"/><line x1="498.50" y1="184.93" x2="498.50" y2="262.00" stroke="#1c1c1c" stroke-width="0.75"/><line x1="498.50" y1="286.51" x2="498.50" y2="325.77" stroke="#111" stroke-width="1.1"/><line x1="498.50" y1="324.85" x2="498.50" y2="642.00" stroke="#1c1c1c" stroke-width="0.75"/><line x1="529.80" y1="299.41" x2="529.80" y2="642.00" stroke="#1c1c1c" stroke-width="0.75"/><line x1="561.30" y1="299.41" x2="561.30" y2="642.00" stroke="#1c1c1c" stroke-width="0.75"/><line x1="592.50" y1="184.93" x2="592.50" y2="262.00" stroke="#1c1c1c" stroke-width="0.75"/><line x1="592.50" y1="299.41" x2="592.50" y2="642.00" stroke="#1c1c1c" stroke-width="0.75"/><line x1="640.50" y1="286.51" x2="640.50" y2="325.77" stroke="#111" stroke-width="1.1"/><line x1="640.50" y1="324.85" x2="640.50" y2="642.00" stroke="#1c1c1c" stroke-width="0.75"/><line x1="700.50" y1="286.51" x2="700.50" y2="325.77" stroke="#111" stroke-width="1.1"/><line x1="700.50" y1="324.85" x2="700.50" y2="642.00" stroke="#1c1c1c" stroke-width="0.75"/><line x1="731.50" y1="286.51" x2="731.50" y2="325.77" stroke="#111" stroke-width="1.1"/><line x1="731.50" y1="324.85" x2="731.50" y2="642.00" stroke="#1c1c1c" stroke-width="0.75"/><line x1="810.40" y1="286.51" x2="810.40" y2="325.77" stroke="#111" stroke-width="1.1"/><line x1="810.40" y1="324.85" x2="810.40" y2="642.00" stroke="#1c1c1c" stroke-width="0.75"/><line x1="833.40" y1="286.51" x2="833.40" y2="325.77" stroke="#111" stroke-width="1.1"/><line x1="833.40" y1="324.85" x2="833.40" y2="642.00" stroke="#1c1c1c" stroke-width="0.75"/><line x1="881.60" y1="286.51" x2="881.60" y2="325.77" stroke="#111" stroke-width="1.1"/><line x1="881.60" y1="324.85" x2="881.60" y2="642.00" stroke="#1c1c1c" stroke-width="0.75"/><line x1="929.60" y1="286.51" x2="929.60" y2="325.77" stroke="#111" stroke-width="1.1"/><line x1="929.60" y1="324.85" x2="929.60" y2="642.00" stroke="#1c1c1c" stroke-width="0.75"/><line x1="999.00" y1="286.51" x2="999.00" y2="325.77" stroke="#111" stroke-width="1.1"/><line x1="999.00" y1="324.85" x2="999.00" y2="642.00" stroke="#1c1c1c" stroke-width="0.75"/><line x1="50.12" y1="185.30" x2="438.88" y2="185.30" stroke="#1c1c1c" stroke-width="0.75"/><line x1="498.12" y1="185.30" x2="592.88" y2="185.30" stroke="#1c1c1c" stroke-width="0.75"/><line x1="50.12" y1="198.02" x2="438.88" y2="198.02" stroke="#1c1c1c" stroke-width="0.75"/><line x1="498.12" y1="198.02" x2="592.88" y2="198.02" stroke="#1c1c1c" stroke-width="0.75"/><line x1="50.12" y1="210.74" x2="438.88" y2="210.74" stroke="#1c1c1c" stroke-width="0.75"/><line x1="498.12" y1="210.74" x2="592.88" y2="210.74" stroke="#1c1c1c" stroke-width="0.75"/><line x1="50.12" y1="223.46" x2="438.88" y2="223.46" stroke="#1c1c1c" stroke-width="0.75"/><line x1="498.12" y1="223.46" x2="592.88" y2="223.46" stroke="#1c1c1c" stroke-width="0.75"/><line x1="50.12" y1="236.18" x2="438.88" y2="236.18" stroke="#1c1c1c" stroke-width="0.75"/><line x1="498.12" y1="236.18" x2="592.88" y2="236.18" stroke="#1c1c1c" stroke-width="0.75"/><line x1="50.12" y1="248.90" x2="438.88" y2="248.90" stroke="#1c1c1c" stroke-width="0.75"/><line x1="498.12" y1="248.90" x2="592.88" y2="248.90" stroke="#1c1c1c" stroke-width="0.75"/><line x1="50.12" y1="261.62" x2="438.88" y2="261.62" stroke="#1c1c1c" stroke-width="0.75"/><line x1="498.12" y1="261.62" x2="592.88" y2="261.62" stroke="#1c1c1c" stroke-width="0.75"/><line x1="50.12" y1="274.34" x2="438.88" y2="274.34" stroke="#1c1c1c" stroke-width="0.75"/><line x1="18.75" y1="287.06" x2="999.55" y2="287.06" stroke="#111" stroke-width="1.1"/><line x1="132.95" y1="299.78" x2="224.05" y2="299.78" stroke="#111" stroke-width="1.1"/><line x1="310.95" y1="299.78" x2="439.05" y2="299.78" stroke="#111" stroke-width="1.1"/><line x1="497.95" y1="299.78" x2="641.05" y2="299.78" stroke="#111" stroke-width="1.1"/><line x1="18.75" y1="325.22" x2="999.55" y2="325.22" stroke="#111" stroke-width="1.1"/><line x1="89.22" y1="337.94" x2="133.88" y2="337.94" stroke="#1c1c1c" stroke-width="0.75"/><line x1="193.12" y1="337.94" x2="223.88" y2="337.94" stroke="#1c1c1c" stroke-width="0.75"/><line x1="253.03" y1="337.94" x2="311.88" y2="337.94" stroke="#1c1c1c" stroke-width="0.75"/><line x1="18.93" y1="350.66" x2="89.97" y2="350.66" stroke="#1c1c1c" stroke-width="0.75"/><line x1="133.12" y1="350.66" x2="193.88" y2="350.66" stroke="#1c1c1c" stroke-width="0.75"/><line x1="223.12" y1="350.66" x2="253.78" y2="350.66" stroke="#1c1c1c" stroke-width="0.75"/><line x1="311.12" y1="350.66" x2="999.38" y2="350.66" stroke="#1c1c1c" stroke-width="0.75"/><line x1="89.22" y1="363.38" x2="133.88" y2="363.38" stroke="#1c1c1c" stroke-width="0.75"/><line x1="193.12" y1="363.38" x2="223.88" y2="363.38" stroke="#1c1c1c" stroke-width="0.75"/><line x1="253.03" y1="363.38" x2="311.88" y2="363.38" stroke="#1c1c1c" stroke-width="0.75"/><line x1="18.93" y1="376.10" x2="89.97" y2="376.10" stroke="#1c1c1c" stroke-width="0.75"/><line x1="133.12" y1="376.10" x2="193.88" y2="376.10" stroke="#1c1c1c" stroke-width="0.75"/><line x1="223.12" y1="376.10" x2="253.78" y2="376.10" stroke="#1c1c1c" stroke-width="0.75"/><line x1="311.12" y1="376.10" x2="999.38" y2="376.10" stroke="#1c1c1c" stroke-width="0.75"/><line x1="89.22" y1="388.82" x2="133.88" y2="388.82" stroke="#1c1c1c" stroke-width="0.75"/><line x1="193.12" y1="388.82" x2="223.88" y2="388.82" stroke="#1c1c1c" stroke-width="0.75"/><line x1="253.03" y1="388.82" x2="311.88" y2="388.82" stroke="#1c1c1c" stroke-width="0.75"/><line x1="18.93" y1="401.54" x2="89.97" y2="401.54" stroke="#1c1c1c" stroke-width="0.75"/><line x1="133.12" y1="401.54" x2="193.88" y2="401.54" stroke="#1c1c1c" stroke-width="0.75"/><line x1="223.12" y1="401.54" x2="253.78" y2="401.54" stroke="#1c1c1c" stroke-width="0.75"/><line x1="311.12" y1="401.54" x2="999.38" y2="401.54" stroke="#1c1c1c" stroke-width="0.75"/><line x1="89.22" y1="414.26" x2="133.88" y2="414.26" stroke="#1c1c1c" stroke-width="0.75"/><line x1="193.12" y1="414.26" x2="223.88" y2="414.26" stroke="#1c1c1c" stroke-width="0.75"/><line x1="253.03" y1="414.26" x2="311.88" y2="414.26" stroke="#1c1c1c" stroke-width="0.75"/><line x1="18.93" y1="426.98" x2="89.97" y2="426.98" stroke="#1c1c1c" stroke-width="0.75"/><line x1="133.12" y1="426.98" x2="193.88" y2="426.98" stroke="#1c1c1c" stroke-width="0.75"/><line x1="223.12" y1="426.98" x2="253.78" y2="426.98" stroke="#1c1c1c" stroke-width="0.75"/><line x1="311.12" y1="426.98" x2="999.38" y2="426.98" stroke="#1c1c1c" stroke-width="0.75"/><line x1="89.22" y1="439.70" x2="133.88" y2="439.70" stroke="#1c1c1c" stroke-width="0.75"/><line x1="193.12" y1="439.70" x2="223.88" y2="439.70" stroke="#1c1c1c" stroke-width="0.75"/><line x1="253.03" y1="439.70" x2="311.88" y2="439.70" stroke="#1c1c1c" stroke-width="0.75"/><line x1="18.93" y1="452.42" x2="89.97" y2="452.42" stroke="#1c1c1c" stroke-width="0.75"/><line x1="133.12" y1="452.42" x2="193.88" y2="452.42" stroke="#1c1c1c" stroke-width="0.75"/><line x1="223.12" y1="452.42" x2="253.78" y2="452.42" stroke="#1c1c1c" stroke-width="0.75"/><line x1="311.12" y1="452.42" x2="999.38" y2="452.42" stroke="#1c1c1c" stroke-width="0.75"/><line x1="89.22" y1="465.14" x2="133.88" y2="465.14" stroke="#1c1c1c" stroke-width="0.75"/><line x1="193.12" y1="465.14" x2="223.88" y2="465.14" stroke="#1c1c1c" stroke-width="0.75"/><line x1="253.03" y1="465.14" x2="311.88" y2="465.14" stroke="#1c1c1c" stroke-width="0.75"/><line x1="18.93" y1="477.86" x2="89.97" y2="477.86" stroke="#1c1c1c" stroke-width="0.75"/><line x1="133.12" y1="477.86" x2="193.88" y2="477.86" stroke="#1c1c1c" stroke-width="0.75"/><line x1="223.12" y1="477.86" x2="253.78" y2="477.86" stroke="#1c1c1c" stroke-width="0.75"/><line x1="311.12" y1="477.86" x2="999.38" y2="477.86" stroke="#1c1c1c" stroke-width="0.75"/><line x1="89.22" y1="490.58" x2="133.88" y2="490.58" stroke="#1c1c1c" stroke-width="0.75"/><line x1="193.12" y1="490.58" x2="223.88" y2="490.58" stroke="#1c1c1c" stroke-width="0.75"/><line x1="253.03" y1="490.58" x2="311.88" y2="490.58" stroke="#1c1c1c" stroke-width="0.75"/><line x1="18.93" y1="503.30" x2="89.97" y2="503.30" stroke="#1c1c1c" stroke-width="0.75"/><line x1="133.12" y1="503.30" x2="193.88" y2="503.30" stroke="#1c1c1c" stroke-width="0.75"/><line x1="223.12" y1="503.30" x2="253.78" y2="503.30" stroke="#1c1c1c" stroke-width="0.75"/><line x1="311.12" y1="503.30" x2="999.38" y2="503.30" stroke="#1c1c1c" stroke-width="0.75"/><line x1="89.22" y1="516.02" x2="133.88" y2="516.02" stroke="#1c1c1c" stroke-width="0.75"/><line x1="193.12" y1="516.02" x2="223.88" y2="516.02" stroke="#1c1c1c" stroke-width="0.75"/><line x1="253.03" y1="516.02" x2="311.88" y2="516.02" stroke="#1c1c1c" stroke-width="0.75"/><line x1="18.93" y1="528.74" x2="89.97" y2="528.74" stroke="#1c1c1c" stroke-width="0.75"/><line x1="133.12" y1="528.74" x2="193.88" y2="528.74" stroke="#1c1c1c" stroke-width="0.75"/><line x1="223.12" y1="528.74" x2="253.78" y2="528.74" stroke="#1c1c1c" stroke-width="0.75"/><line x1="311.12" y1="528.74" x2="999.38" y2="528.74" stroke="#1c1c1c" stroke-width="0.75"/><line x1="89.22" y1="541.46" x2="133.88" y2="541.46" stroke="#1c1c1c" stroke-width="0.75"/><line x1="193.12" y1="541.46" x2="223.88" y2="541.46" stroke="#1c1c1c" stroke-width="0.75"/><line x1="253.03" y1="541.46" x2="311.88" y2="541.46" stroke="#1c1c1c" stroke-width="0.75"/><line x1="18.93" y1="554.18" x2="89.97" y2="554.18" stroke="#1c1c1c" stroke-width="0.75"/><line x1="133.12" y1="554.18" x2="193.88" y2="554.18" stroke="#1c1c1c" stroke-width="0.75"/><line x1="223.12" y1="554.18" x2="253.78" y2="554.18" stroke="#1c1c1c" stroke-width="0.75"/><line x1="311.12" y1="554.18" x2="999.38" y2="554.18" stroke="#1c1c1c" stroke-width="0.75"/><line x1="89.22" y1="566.90" x2="133.88" y2="566.90" stroke="#1c1c1c" stroke-width="0.75"/><line x1="193.12" y1="566.90" x2="223.88" y2="566.90" stroke="#1c1c1c" stroke-width="0.75"/><line x1="253.03" y1="566.90" x2="311.88" y2="566.90" stroke="#1c1c1c" stroke-width="0.75"/><line x1="18.93" y1="579.62" x2="89.97" y2="579.62" stroke="#1c1c1c" stroke-width="0.75"/><line x1="133.12" y1="579.62" x2="193.88" y2="579.62" stroke="#1c1c1c" stroke-width="0.75"/><line x1="223.12" y1="579.62" x2="253.78" y2="579.62" stroke="#1c1c1c" stroke-width="0.75"/><line x1="311.12" y1="579.62" x2="999.38" y2="579.62" stroke="#1c1c1c" stroke-width="0.75"/><line x1="89.22" y1="592.34" x2="133.88" y2="592.34" stroke="#1c1c1c" stroke-width="0.75"/><line x1="193.12" y1="592.34" x2="223.88" y2="592.34" stroke="#1c1c1c" stroke-width="0.75"/><line x1="253.03" y1="592.34" x2="311.88" y2="592.34" stroke="#1c1c1c" stroke-width="0.75"/><line x1="18.93" y1="605.06" x2="89.97" y2="605.06" stroke="#1c1c1c" stroke-width="0.75"/><line x1="133.12" y1="605.06" x2="193.88" y2="605.06" stroke="#1c1c1c" stroke-width="0.75"/><line x1="223.12" y1="605.06" x2="253.78" y2="605.06" stroke="#1c1c1c" stroke-width="0.75"/><line x1="311.12" y1="605.06" x2="999.38" y2="605.06" stroke="#1c1c1c" stroke-width="0.75"/><line x1="89.22" y1="617.78" x2="133.88" y2="617.78" stroke="#1c1c1c" stroke-width="0.75"/><line x1="193.12" y1="617.78" x2="223.88" y2="617.78" stroke="#1c1c1c" stroke-width="0.75"/><line x1="253.03" y1="617.78" x2="311.88" y2="617.78" stroke="#1c1c1c" stroke-width="0.75"/><line x1="18.93" y1="630.50" x2="89.97" y2="630.50" stroke="#1c1c1c" stroke-width="0.75"/><line x1="133.12" y1="630.50" x2="193.88" y2="630.50" stroke="#1c1c1c" stroke-width="0.75"/><line x1="223.12" y1="630.50" x2="253.78" y2="630.50" stroke="#1c1c1c" stroke-width="0.75"/><line x1="311.12" y1="630.50" x2="999.38" y2="630.50" stroke="#1c1c1c" stroke-width="0.75"/><line x1="89.22" y1="643.22" x2="133.88" y2="643.22" stroke="#1c1c1c" stroke-width="0.75"/><line x1="193.12" y1="643.22" x2="223.88" y2="643.22" stroke="#1c1c1c" stroke-width="0.75"/><line x1="253.03" y1="643.22" x2="311.88" y2="643.22" stroke="#1c1c1c" stroke-width="0.75"/><line x1="18.93" y1="655.94" x2="89.97" y2="655.94" stroke="#1c1c1c" stroke-width="0.75"/><line x1="133.12" y1="655.94" x2="193.88" y2="655.94" stroke="#1c1c1c" stroke-width="0.75"/><line x1="223.12" y1="655.94" x2="253.78" y2="655.94" stroke="#1c1c1c" stroke-width="0.75"/><line x1="311.12" y1="655.94" x2="999.38" y2="655.94" stroke="#1c1c1c" stroke-width="0.75"/><line x1="89.22" y1="668.66" x2="133.88" y2="668.66" stroke="#1c1c1c" stroke-width="0.75"/><line x1="193.12" y1="668.66" x2="223.88" y2="668.66" stroke="#1c1c1c" stroke-width="0.75"/><line x1="253.03" y1="668.66" x2="311.88" y2="668.66" stroke="#1c1c1c" stroke-width="0.75"/><line x1="18.93" y1="681.38" x2="89.97" y2="681.38" stroke="#1c1c1c" stroke-width="0.75"/><line x1="133.12" y1="681.38" x2="193.88" y2="681.38" stroke="#1c1c1c" stroke-width="0.75"/><line x1="223.12" y1="681.38" x2="253.78" y2="681.38" stroke="#1c1c1c" stroke-width="0.75"/><line x1="311.12" y1="681.38" x2="999.38" y2="681.38" stroke="#1c1c1c" stroke-width="0.75"/><rect x="998.10" y="286.06" width="1.90" height="355.94" fill="#fff"/><line x1="999.1" y1="186.8" x2="999.1" y2="642" stroke="#adadad" stroke-width="1.8" stroke-dasharray="3.8 2.1"/><path d="M19.80 325.72h4.9l-4.9 4.9z" fill="#1e7b1e"/><path d="M422.10 325.72h4.9l-4.9 4.9z" fill="#1e7b1e"/><path d="M882.10 325.72h4.9l-4.9 4.9z" fill="#1e7b1e"/><path d="M19.80 351.16h4.9l-4.9 4.9z" fill="#1e7b1e"/><path d="M422.10 351.16h4.9l-4.9 4.9z" fill="#1e7b1e"/><path d="M882.10 351.16h4.9l-4.9 4.9z" fill="#1e7b1e"/><path d="M19.80 376.60h4.9l-4.9 4.9z" fill="#1e7b1e"/><path d="M422.10 376.60h4.9l-4.9 4.9z" fill="#1e7b1e"/><path d="M882.10 376.60h4.9l-4.9 4.9z" fill="#1e7b1e"/><path d="M19.80 402.04h4.9l-4.9 4.9z" fill="#1e7b1e"/><path d="M422.10 402.04h4.9l-4.9 4.9z" fill="#1e7b1e"/><path d="M882.10 402.04h4.9l-4.9 4.9z" fill="#1e7b1e"/><path d="M19.80 427.48h4.9l-4.9 4.9z" fill="#1e7b1e"/><path d="M422.10 427.48h4.9l-4.9 4.9z" fill="#1e7b1e"/><path d="M882.10 427.48h4.9l-4.9 4.9z" fill="#1e7b1e"/><path d="M19.80 452.92h4.9l-4.9 4.9z" fill="#1e7b1e"/><path d="M422.10 452.92h4.9l-4.9 4.9z" fill="#1e7b1e"/><path d="M882.10 452.92h4.9l-4.9 4.9z" fill="#1e7b1e"/><path d="M19.80 478.36h4.9l-4.9 4.9z" fill="#1e7b1e"/><path d="M422.10 478.36h4.9l-4.9 4.9z" fill="#1e7b1e"/><path d="M882.10 478.36h4.9l-4.9 4.9z" fill="#1e7b1e"/><path d="M19.80 503.80h4.9l-4.9 4.9z" fill="#1e7b1e"/><path d="M422.10 503.80h4.9l-4.9 4.9z" fill="#1e7b1e"/><path d="M882.10 503.80h4.9l-4.9 4.9z" fill="#1e7b1e"/><path d="M19.80 529.24h4.9l-4.9 4.9z" fill="#1e7b1e"/><path d="M422.10 529.24h4.9l-4.9 4.9z" fill="#1e7b1e"/><path d="M882.10 529.24h4.9l-4.9 4.9z" fill="#1e7b1e"/><path d="M19.80 554.68h4.9l-4.9 4.9z" fill="#1e7b1e"/><path d="M422.10 554.68h4.9l-4.9 4.9z" fill="#1e7b1e"/><path d="M882.10 554.68h4.9l-4.9 4.9z" fill="#1e7b1e"/><path d="M19.80 580.12h4.9l-4.9 4.9z" fill="#1e7b1e"/><path d="M422.10 580.12h4.9l-4.9 4.9z" fill="#1e7b1e"/><path d="M882.10 580.12h4.9l-4.9 4.9z" fill="#1e7b1e"/><path d="M19.80 605.56h4.9l-4.9 4.9z" fill="#1e7b1e"/><path d="M422.10 605.56h4.9l-4.9 4.9z" fill="#1e7b1e"/><path d="M882.10 605.56h4.9l-4.9 4.9z" fill="#1e7b1e"/><path d="M19.80 631.00h4.9l-4.9 4.9z" fill="#1e7b1e"/><path d="M422.10 631.00h4.9l-4.9 4.9z" fill="#1e7b1e"/><path d="M882.10 631.00h4.9l-4.9 4.9z" fill="#1e7b1e"/><path d="M19.80 656.44h4.9l-4.9 4.9z" fill="#1e7b1e"/><path d="M422.10 656.44h4.9l-4.9 4.9z" fill="#1e7b1e"/><path d="M882.10 656.44h4.9l-4.9 4.9z" fill="#1e7b1e"/><path d="M641.00 554.68h4.9l-4.9 4.9z" fill="#1e7b1e"/><path d="M641.00 631.00h4.9l-4.9 4.9z" fill="#1e7b1e"/><rect x="0" y="185.30" width="19.6" height="456.70" fill="#e6e6e6"/><line x1="19.40" y1="185.30" x2="19.40" y2="642.00" stroke="#bdbdbd" stroke-width="0.9"/><line x1="0.00" y1="198.02" x2="19.30" y2="198.02" stroke="#c9c9c9" stroke-width="0.9"/><line x1="0.00" y1="210.74" x2="19.30" y2="210.74" stroke="#c9c9c9" stroke-width="0.9"/><line x1="0.00" y1="223.46" x2="19.30" y2="223.46" stroke="#c9c9c9" stroke-width="0.9"/><line x1="0.00" y1="236.18" x2="19.30" y2="236.18" stroke="#c9c9c9" stroke-width="0.9"/><line x1="0.00" y1="248.90" x2="19.30" y2="248.90" stroke="#c9c9c9" stroke-width="0.9"/><line x1="0.00" y1="261.62" x2="19.30" y2="261.62" stroke="#c9c9c9" stroke-width="0.9"/><line x1="0.00" y1="274.34" x2="19.30" y2="274.34" stroke="#c9c9c9" stroke-width="0.9"/><line x1="0.00" y1="287.06" x2="19.30" y2="287.06" stroke="#c9c9c9" stroke-width="0.9"/><line x1="0.00" y1="299.78" x2="19.30" y2="299.78" stroke="#c9c9c9" stroke-width="0.9"/><line x1="0.00" y1="312.50" x2="19.30" y2="312.50" stroke="#c9c9c9" stroke-width="0.9"/><line x1="0.00" y1="325.22" x2="19.30" y2="325.22" stroke="#c9c9c9" stroke-width="0.9"/><line x1="0.00" y1="337.94" x2="19.30" y2="337.94" stroke="#c9c9c9" stroke-width="0.9"/><line x1="0.00" y1="350.66" x2="19.30" y2="350.66" stroke="#c9c9c9" stroke-width="0.9"/><line x1="0.00" y1="363.38" x2="19.30" y2="363.38" stroke="#c9c9c9" stroke-width="0.9"/><line x1="0.00" y1="376.10" x2="19.30" y2="376.10" stroke="#c9c9c9" stroke-width="0.9"/><line x1="0.00" y1="388.82" x2="19.30" y2="388.82" stroke="#c9c9c9" stroke-width="0.9"/><line x1="0.00" y1="401.54" x2="19.30" y2="401.54" stroke="#c9c9c9" stroke-width="0.9"/><line x1="0.00" y1="414.26" x2="19.30" y2="414.26" stroke="#c9c9c9" stroke-width="0.9"/><line x1="0.00" y1="426.98" x2="19.30" y2="426.98" stroke="#c9c9c9" stroke-width="0.9"/><line x1="0.00" y1="439.70" x2="19.30" y2="439.70" stroke="#c9c9c9" stroke-width="0.9"/><line x1="0.00" y1="452.42" x2="19.30" y2="452.42" stroke="#c9c9c9" stroke-width="0.9"/><line x1="0.00" y1="465.14" x2="19.30" y2="465.14" stroke="#c9c9c9" stroke-width="0.9"/><line x1="0.00" y1="477.86" x2="19.30" y2="477.86" stroke="#c9c9c9" stroke-width="0.9"/><line x1="0.00" y1="490.58" x2="19.30" y2="490.58" stroke="#c9c9c9" stroke-width="0.9"/><line x1="0.00" y1="503.30" x2="19.30" y2="503.30" stroke="#c9c9c9" stroke-width="0.9"/><line x1="0.00" y1="516.02" x2="19.30" y2="516.02" stroke="#c9c9c9" stroke-width="0.9"/><line x1="0.00" y1="528.74" x2="19.30" y2="528.74" stroke="#c9c9c9" stroke-width="0.9"/><line x1="0.00" y1="541.46" x2="19.30" y2="541.46" stroke="#c9c9c9" stroke-width="0.9"/><line x1="0.00" y1="554.18" x2="19.30" y2="554.18" stroke="#c9c9c9" stroke-width="0.9"/><line x1="0.00" y1="566.90" x2="19.30" y2="566.90" stroke="#c9c9c9" stroke-width="0.9"/><line x1="0.00" y1="579.62" x2="19.30" y2="579.62" stroke="#c9c9c9" stroke-width="0.9"/><line x1="0.00" y1="592.34" x2="19.30" y2="592.34" stroke="#c9c9c9" stroke-width="0.9"/><line x1="0.00" y1="605.06" x2="19.30" y2="605.06" stroke="#c9c9c9" stroke-width="0.9"/><line x1="0.00" y1="617.78" x2="19.30" y2="617.78" stroke="#c9c9c9" stroke-width="0.9"/><line x1="0.00" y1="630.50" x2="19.30" y2="630.50" stroke="#c9c9c9" stroke-width="0.9"/><line x1="0.00" y1="643.22" x2="19.30" y2="643.22" stroke="#c9c9c9" stroke-width="0.9"/><rect x="0" y="184.10" width="1000" height="1.5" fill="#e6e6e6"/><line x1="0.00" y1="185.30" x2="1000.00" y2="185.30" stroke="#b4b4b4" stroke-width="0.9"/></svg>
<div style="position:absolute;left:-166px;top:168px;width:400px;height:20px;text-align:center;font-size:9.6px;line-height:20px;color:#303030;white-space:pre;"><span style="display:inline-block;transform:translate(0.50px,0.60px) scaleX(1.0000) rotate(0.03deg);transform-origin:center center">A</span></div>
<div style="position:absolute;left:-131px;top:168px;width:400px;height:20px;text-align:center;font-size:9.6px;line-height:20px;color:#303030;white-space:pre;"><span style="display:inline-block;transform:translate(0.65px,0.60px) scaleX(1.0000) rotate(0.03deg);transform-origin:center center">B</span></div>
<div style="position:absolute;left:-89px;top:168px;width:400px;height:20px;text-align:center;font-size:9.6px;line-height:20px;color:#303030;white-space:pre;"><span style="display:inline-block;transform:translate(0.15px,0.60px) scaleX(1.0000) rotate(0.03deg);transform-origin:center center">C</span></div>
<div style="position:absolute;left:-52px;top:168px;width:400px;height:20px;text-align:center;font-size:9.6px;line-height:20px;color:#303030;white-space:pre;"><span style="display:inline-block;transform:translate(0.10px,0.60px) scaleX(1.0000) rotate(0.03deg);transform-origin:center center">D</span></div>
<div style="position:absolute;left:-22px;top:168px;width:400px;height:20px;text-align:center;font-size:9.6px;line-height:20px;color:#303030;white-space:pre;"><span style="display:inline-block;transform:translate(0.10px,0.60px) scaleX(1.0000) rotate(0.03deg);transform-origin:center center">E</span></div>
<div style="position:absolute;left:8px;top:168px;width:400px;height:20px;text-align:center;font-size:9.6px;line-height:20px;color:#303030;white-space:pre;"><span style="display:inline-block;transform:translate(0.10px,0.60px) scaleX(1.0000) rotate(0.03deg);transform-origin:center center">F</span></div>
<div style="position:absolute;left:38px;top:168px;width:400px;height:20px;text-align:center;font-size:9.6px;line-height:20px;color:#303030;white-space:pre;"><span style="display:inline-block;transform:translate(0.05px,0.60px) scaleX(1.0000) rotate(0.03deg);transform-origin:center center">G</span></div>
<div style="position:absolute;left:82px;top:168px;width:400px;height:20px;text-align:center;font-size:9.6px;line-height:20px;color:#303030;white-space:pre;"><span style="display:inline-block;transform:translate(0.05px,0.60px) scaleX(1.0000) rotate(0.03deg);transform-origin:center center">H</span></div>
<div style="position:absolute;left:129px;top:168px;width:400px;height:20px;text-align:center;font-size:9.6px;line-height:20px;color:#303030;white-space:pre;"><span style="display:inline-block;transform:translate(0.65px,0.60px) scaleX(1.0000) rotate(0.03deg);transform-origin:center center">I</span></div>
<div style="position:absolute;left:166px;top:168px;width:400px;height:20px;text-align:center;font-size:9.6px;line-height:20px;color:#303030;white-space:pre;"><span style="display:inline-block;transform:translate(0.60px,0.60px) scaleX(1.0000) rotate(0.03deg);transform-origin:center center">J</span></div>
<div style="position:absolute;left:203px;top:168px;width:400px;height:20px;text-align:center;font-size:9.6px;line-height:20px;color:#303030;white-space:pre;"><span style="display:inline-block;transform:translate(0.10px,0.60px) scaleX(1.0000) rotate(0.03deg);transform-origin:center center">K</span></div>
<div style="position:absolute;left:229px;top:168px;width:400px;height:20px;text-align:center;font-size:9.6px;line-height:20px;color:#303030;white-space:pre;"><span style="display:inline-block;transform:translate(0.65px,0.60px) scaleX(1.0000) rotate(0.03deg);transform-origin:center center">L</span></div>
<div style="position:absolute;left:268px;top:168px;width:400px;height:20px;text-align:center;font-size:9.6px;line-height:20px;color:#303030;white-space:pre;"><span style="display:inline-block;transform:translate(0.80px,0.60px) scaleX(1.0000) rotate(0.03deg);transform-origin:center center">M</span></div>
<div style="position:absolute;left:314px;top:168px;width:400px;height:20px;text-align:center;font-size:9.6px;line-height:20px;color:#303030;white-space:pre;"><span style="display:inline-block;transform:translate(0.45px,0.60px) scaleX(1.0000) rotate(0.03deg);transform-origin:center center">N</span></div>
<div style="position:absolute;left:345px;top:168px;width:400px;height:20px;text-align:center;font-size:9.6px;line-height:20px;color:#303030;white-space:pre;"><span style="display:inline-block;transform:translate(0.85px,0.60px) scaleX(1.0000) rotate(0.03deg);transform-origin:center center">O</span></div>
<div style="position:absolute;left:377px;top:168px;width:400px;height:20px;text-align:center;font-size:9.6px;line-height:20px;color:#303030;white-space:pre;"><span style="display:inline-block;transform:translate(0.20px,0.60px) scaleX(1.0000) rotate(0.03deg);transform-origin:center center">P</span></div>
<div style="position:absolute;left:416px;top:168px;width:400px;height:20px;text-align:center;font-size:9.6px;line-height:20px;color:#303030;white-space:pre;"><span style="display:inline-block;transform:translate(0.80px,0.60px) scaleX(1.0000) rotate(0.03deg);transform-origin:center center">Q</span></div>
<div style="position:absolute;left:470px;top:168px;width:400px;height:20px;text-align:center;font-size:9.6px;line-height:20px;color:#303030;white-space:pre;"><span style="display:inline-block;transform:translate(0.80px,0.60px) scaleX(1.0000) rotate(0.03deg);transform-origin:center center">R</span></div>
<div style="position:absolute;left:516px;top:168px;width:400px;height:20px;text-align:center;font-size:9.6px;line-height:20px;color:#303030;white-space:pre;"><span style="display:inline-block;transform:translate(0.30px,0.60px) scaleX(1.0000) rotate(0.03deg);transform-origin:center center">S</span></div>
<div style="position:absolute;left:571px;top:168px;width:400px;height:20px;text-align:center;font-size:9.6px;line-height:20px;color:#303030;white-space:pre;"><span style="display:inline-block;transform:translate(0.25px,0.60px) scaleX(1.0000) rotate(0.03deg);transform-origin:center center">T</span></div>
<div style="position:absolute;left:622px;top:168px;width:400px;height:20px;text-align:center;font-size:9.6px;line-height:20px;color:#303030;white-space:pre;"><span style="display:inline-block;transform:translate(0.20px,0.60px) scaleX(1.0000) rotate(0.03deg);transform-origin:center center">U</span></div>
<div style="position:absolute;left:657px;top:168px;width:400px;height:20px;text-align:center;font-size:9.6px;line-height:20px;color:#303030;white-space:pre;"><span style="display:inline-block;transform:translate(0.80px,0.60px) scaleX(1.0000) rotate(0.03deg);transform-origin:center center">V</span></div>
<div style="position:absolute;left:705px;top:168px;width:400px;height:20px;text-align:center;font-size:9.6px;line-height:20px;color:#303030;white-space:pre;"><span style="display:inline-block;transform:translate(0.90px,0.60px) scaleX(1.0000) rotate(0.03deg);transform-origin:center center">W</span></div>
<div style="position:absolute;left:764px;top:168px;width:400px;height:20px;text-align:center;font-size:9.6px;line-height:20px;color:#303030;white-space:pre;"><span style="display:inline-block;transform:translate(0.60px,0.60px) scaleX(1.0000) rotate(0.03deg);transform-origin:center center">X</span></div>
<div style="position:absolute;left:-191px;top:182px;width:400px;height:20px;text-align:center;font-size:10.2px;line-height:20px;color:#303030;white-space:pre;"><span style="display:inline-block;transform:translate(0.60px,0.47px) scaleX(0.9700) rotate(0.03deg);transform-origin:center center">1</span></div>
<div style="position:absolute;left:-191px;top:195px;width:400px;height:20px;text-align:center;font-size:10.2px;line-height:20px;color:#303030;white-space:pre;"><span style="display:inline-block;transform:translate(0.60px,0.19px) scaleX(0.9700) rotate(0.03deg);transform-origin:center center">2</span></div>
<div style="position:absolute;left:-191px;top:207px;width:400px;height:20px;text-align:center;font-size:10.2px;line-height:20px;color:#303030;white-space:pre;"><span style="display:inline-block;transform:translate(0.60px,0.91px) scaleX(0.9700) rotate(0.03deg);transform-origin:center center">3</span></div>
<div style="position:absolute;left:-191px;top:220px;width:400px;height:20px;text-align:center;font-size:10.2px;line-height:20px;color:#303030;white-space:pre;"><span style="display:inline-block;transform:translate(0.60px,0.63px) scaleX(0.9700) rotate(0.03deg);transform-origin:center center">4</span></div>
<div style="position:absolute;left:-191px;top:233px;width:400px;height:20px;text-align:center;font-size:10.2px;line-height:20px;color:#303030;white-space:pre;"><span style="display:inline-block;transform:translate(0.60px,0.35px) scaleX(0.9700) rotate(0.03deg);transform-origin:center center">5</span></div>
<div style="position:absolute;left:-191px;top:246px;width:400px;height:20px;text-align:center;font-size:10.2px;line-height:20px;color:#303030;white-space:pre;"><span style="display:inline-block;transform:translate(0.60px,0.07px) scaleX(0.9700) rotate(0.03deg);transform-origin:center center">6</span></div>
<div style="position:absolute;left:-191px;top:258px;width:400px;height:20px;text-align:center;font-size:10.2px;line-height:20px;color:#303030;white-space:pre;"><span style="display:inline-block;transform:translate(0.60px,0.79px) scaleX(0.9700) rotate(0.03deg);transform-origin:center center">7</span></div>
<div style="position:absolute;left:-191px;top:271px;width:400px;height:20px;text-align:center;font-size:10.2px;line-height:20px;color:#303030;white-space:pre;"><span style="display:inline-block;transform:translate(0.60px,0.51px) scaleX(0.9700) rotate(0.03deg);transform-origin:center center">8</span></div>
<div style="position:absolute;left:-191px;top:284px;width:400px;height:20px;text-align:center;font-size:10.2px;line-height:20px;color:#303030;white-space:pre;"><span style="display:inline-block;transform:translate(0.60px,0.23px) scaleX(0.9700) rotate(0.03deg);transform-origin:center center">9</span></div>
<div style="position:absolute;left:-191px;top:296px;width:400px;height:20px;text-align:center;font-size:10.2px;line-height:20px;color:#303030;white-space:pre;"><span style="display:inline-block;transform:translate(0.60px,0.95px) scaleX(0.9700) rotate(0.03deg);transform-origin:center center">10</span></div>
<div style="position:absolute;left:-191px;top:309px;width:400px;height:20px;text-align:center;font-size:10.2px;line-height:20px;color:#303030;white-space:pre;"><span style="display:inline-block;transform:translate(0.60px,0.67px) scaleX(0.9700) rotate(0.03deg);transform-origin:center center">11</span></div>
<div style="position:absolute;left:-191px;top:322px;width:400px;height:20px;text-align:center;font-size:10.2px;line-height:20px;color:#303030;white-space:pre;"><span style="display:inline-block;transform:translate(0.60px,0.39px) scaleX(0.9700) rotate(0.03deg);transform-origin:center center">12</span></div>
<div style="position:absolute;left:-191px;top:335px;width:400px;height:20px;text-align:center;font-size:10.2px;line-height:20px;color:#303030;white-space:pre;"><span style="display:inline-block;transform:translate(0.60px,0.11px) scaleX(0.9700) rotate(0.03deg);transform-origin:center center">13</span></div>
<div style="position:absolute;left:-191px;top:347px;width:400px;height:20px;text-align:center;font-size:10.2px;line-height:20px;color:#303030;white-space:pre;"><span style="display:inline-block;transform:translate(0.60px,0.83px) scaleX(0.9700) rotate(0.03deg);transform-origin:center center">14</span></div>
<div style="position:absolute;left:-191px;top:360px;width:400px;height:20px;text-align:center;font-size:10.2px;line-height:20px;color:#303030;white-space:pre;"><span style="display:inline-block;transform:translate(0.60px,0.55px) scaleX(0.9700) rotate(0.03deg);transform-origin:center center">15</span></div>
<div style="position:absolute;left:-191px;top:373px;width:400px;height:20px;text-align:center;font-size:10.2px;line-height:20px;color:#303030;white-space:pre;"><span style="display:inline-block;transform:translate(0.60px,0.27px) scaleX(0.9700) rotate(0.03deg);transform-origin:center center">16</span></div>
<div style="position:absolute;left:-191px;top:385px;width:400px;height:20px;text-align:center;font-size:10.2px;line-height:20px;color:#303030;white-space:pre;"><span style="display:inline-block;transform:translate(0.60px,0.99px) scaleX(0.9700) rotate(0.03deg);transform-origin:center center">17</span></div>
<div style="position:absolute;left:-191px;top:398px;width:400px;height:20px;text-align:center;font-size:10.2px;line-height:20px;color:#303030;white-space:pre;"><span style="display:inline-block;transform:translate(0.60px,0.71px) scaleX(0.9700) rotate(0.03deg);transform-origin:center center">18</span></div>
<div style="position:absolute;left:-191px;top:411px;width:400px;height:20px;text-align:center;font-size:10.2px;line-height:20px;color:#303030;white-space:pre;"><span style="display:inline-block;transform:translate(0.60px,0.43px) scaleX(0.9700) rotate(0.03deg);transform-origin:center center">19</span></div>
<div style="position:absolute;left:-191px;top:424px;width:400px;height:20px;text-align:center;font-size:10.2px;line-height:20px;color:#303030;white-space:pre;"><span style="display:inline-block;transform:translate(0.60px,0.15px) scaleX(0.9700) rotate(0.03deg);transform-origin:center center">20</span></div>
<div style="position:absolute;left:-191px;top:436px;width:400px;height:20px;text-align:center;font-size:10.2px;line-height:20px;color:#303030;white-space:pre;"><span style="display:inline-block;transform:translate(0.60px,0.87px) scaleX(0.9700) rotate(0.03deg);transform-origin:center center">21</span></div>
<div style="position:absolute;left:-191px;top:449px;width:400px;height:20px;text-align:center;font-size:10.2px;line-height:20px;color:#303030;white-space:pre;"><span style="display:inline-block;transform:translate(0.60px,0.59px) scaleX(0.9700) rotate(0.03deg);transform-origin:center center">22</span></div>
<div style="position:absolute;left:-191px;top:462px;width:400px;height:20px;text-align:center;font-size:10.2px;line-height:20px;color:#303030;white-space:pre;"><span style="display:inline-block;transform:translate(0.60px,0.31px) scaleX(0.9700) rotate(0.03deg);transform-origin:center center">23</span></div>
<div style="position:absolute;left:-191px;top:475px;width:400px;height:20px;text-align:center;font-size:10.2px;line-height:20px;color:#303030;white-space:pre;"><span style="display:inline-block;transform:translate(0.60px,0.03px) scaleX(0.9700) rotate(0.03deg);transform-origin:center center">24</span></div>
<div style="position:absolute;left:-191px;top:487px;width:400px;height:20px;text-align:center;font-size:10.2px;line-height:20px;color:#303030;white-space:pre;"><span style="display:inline-block;transform:translate(0.60px,0.75px) scaleX(0.9700) rotate(0.03deg);transform-origin:center center">25</span></div>
<div style="position:absolute;left:-191px;top:500px;width:400px;height:20px;text-align:center;font-size:10.2px;line-height:20px;color:#303030;white-space:pre;"><span style="display:inline-block;transform:translate(0.60px,0.47px) scaleX(0.9700) rotate(0.03deg);transform-origin:center center">26</span></div>
<div style="position:absolute;left:-191px;top:513px;width:400px;height:20px;text-align:center;font-size:10.2px;line-height:20px;color:#303030;white-space:pre;"><span style="display:inline-block;transform:translate(0.60px,0.19px) scaleX(0.9700) rotate(0.03deg);transform-origin:center center">27</span></div>
<div style="position:absolute;left:-191px;top:525px;width:400px;height:20px;text-align:center;font-size:10.2px;line-height:20px;color:#303030;white-space:pre;"><span style="display:inline-block;transform:translate(0.60px,0.91px) scaleX(0.9700) rotate(0.03deg);transform-origin:center center">28</span></div>
<div style="position:absolute;left:-191px;top:538px;width:400px;height:20px;text-align:center;font-size:10.2px;line-height:20px;color:#303030;white-space:pre;"><span style="display:inline-block;transform:translate(0.60px,0.63px) scaleX(0.9700) rotate(0.03deg);transform-origin:center center">29</span></div>
<div style="position:absolute;left:-191px;top:551px;width:400px;height:20px;text-align:center;font-size:10.2px;line-height:20px;color:#303030;white-space:pre;"><span style="display:inline-block;transform:translate(0.60px,0.35px) scaleX(0.9700) rotate(0.03deg);transform-origin:center center">30</span></div>
<div style="position:absolute;left:-191px;top:564px;width:400px;height:20px;text-align:center;font-size:10.2px;line-height:20px;color:#303030;white-space:pre;"><span style="display:inline-block;transform:translate(0.60px,0.07px) scaleX(0.9700) rotate(0.03deg);transform-origin:center center">31</span></div>
<div style="position:absolute;left:-191px;top:576px;width:400px;height:20px;text-align:center;font-size:10.2px;line-height:20px;color:#303030;white-space:pre;"><span style="display:inline-block;transform:translate(0.60px,0.79px) scaleX(0.9700) rotate(0.03deg);transform-origin:center center">32</span></div>
<div style="position:absolute;left:-191px;top:589px;width:400px;height:20px;text-align:center;font-size:10.2px;line-height:20px;color:#303030;white-space:pre;"><span style="display:inline-block;transform:translate(0.60px,0.51px) scaleX(0.9700) rotate(0.03deg);transform-origin:center center">33</span></div>
<div style="position:absolute;left:-191px;top:602px;width:400px;height:20px;text-align:center;font-size:10.2px;line-height:20px;color:#303030;white-space:pre;"><span style="display:inline-block;transform:translate(0.60px,0.23px) scaleX(0.9700) rotate(0.03deg);transform-origin:center center">34</span></div>
<div style="position:absolute;left:-191px;top:614px;width:400px;height:20px;text-align:center;font-size:10.2px;line-height:20px;color:#303030;white-space:pre;"><span style="display:inline-block;transform:translate(0.60px,0.95px) scaleX(0.9700) rotate(0.03deg);transform-origin:center center">35</span></div>
<div style="position:absolute;left:-191px;top:627px;width:400px;height:20px;text-align:center;font-size:10.2px;line-height:20px;color:#303030;white-space:pre;"><span style="display:inline-block;transform:translate(0.60px,0.67px) scaleX(0.9700) rotate(0.03deg);transform-origin:center center">36</span></div>
<div style="position:absolute;left:-191px;top:640px;width:400px;height:20px;text-align:center;font-size:10.2px;line-height:20px;color:#303030;white-space:pre;"><span style="display:inline-block;transform:translate(0.60px,0.39px) scaleX(0.9700) rotate(0.03deg);transform-origin:center center">37</span></div>
<div style="position:absolute;left:-19px;top:182px;width:400px;height:20px;text-align:center;font-size:10.0px;line-height:20px;color:#000;white-space:pre;font-weight:bold;"><span style="display:inline-block;transform:translate(0.00px,0.05px) scaleX(0.8211) rotate(0.03deg);transform-origin:center center">2. BUZYÜKÜ BÖLGESİ</span></div>
<div style="position:absolute;left:-19px;top:194px;width:400px;height:20px;text-align:center;font-size:10.0px;line-height:20px;color:#000;white-space:pre;font-weight:bold;"><span style="display:inline-block;transform:translate(0.00px,0.77px) scaleX(0.8113) rotate(0.03deg);transform-origin:center center">Signa(Gerime)= 11kg/mm^2 Alınmıştır.</span></div>
<div style="position:absolute;left:-19px;top:207px;width:400px;height:20px;text-align:center;font-size:10.0px;line-height:20px;color:#000;white-space:pre;font-weight:bold;"><span style="display:inline-block;transform:translate(0.00px,0.49px) scaleX(0.8005) rotate(0.03deg);transform-origin:center center">34.5 kV  3 AWG  TEK DEVRE</span></div>
<div style="position:absolute;left:-19px;top:220px;width:400px;height:20px;text-align:center;font-size:10.0px;line-height:20px;color:#000;white-space:pre;font-weight:bold;"><span style="display:inline-block;transform:translate(0.00px,0.21px) scaleX(0.8265) rotate(0.03deg);transform-origin:center center">GALV.DEMİR DİREKLİ MESNET İZOLATÖRLÜ</span></div>
<div style="position:absolute;left:-19px;top:232px;width:400px;height:20px;text-align:center;font-size:10.0px;line-height:20px;color:#000;white-space:pre;font-weight:bold;"><span style="display:inline-block;transform:translate(0.00px,0.93px) scaleX(0.8166) rotate(0.03deg);transform-origin:center center">GÜLYAZI KÖK VE DEMİRARSLAN ORDU KÖYÜ ENH</span></div>
<div style="position:absolute;left:-19px;top:258px;width:400px;height:20px;text-align:center;font-size:10.0px;line-height:20px;color:#000;white-space:pre;font-weight:bold;"><span style="display:inline-block;transform:translate(0.00px,0.37px) scaleX(0.8265) rotate(0.03deg);transform-origin:center center">DİREK DAĞITIM CETVELİ</span></div>
<div style="position:absolute;left:313px;top:182px;width:400px;height:20px;text-align:left;font-size:10.0px;line-height:20px;color:#1a1a1a;white-space:pre;"><span style="display:inline-block;transform:translate(0.50px,0.05px) scaleX(0.8170) rotate(0.03deg);transform-origin:left center">T : NORMAL TAŞIYICI</span></div>
<div style="position:absolute;left:313px;top:194px;width:400px;height:20px;text-align:left;font-size:10.0px;line-height:20px;color:#1a1a1a;white-space:pre;"><span style="display:inline-block;transform:translate(0.50px,0.77px) scaleX(0.8170) rotate(0.03deg);transform-origin:left center">AT : AĞIR TAŞIYICI</span></div>
<div style="position:absolute;left:313px;top:207px;width:400px;height:20px;text-align:left;font-size:10.0px;line-height:20px;color:#1a1a1a;white-space:pre;"><span style="display:inline-block;transform:translate(0.50px,0.49px) scaleX(0.8170) rotate(0.03deg);transform-origin:left center">KT : KÖŞEDE TAŞIYICI</span></div>
<div style="position:absolute;left:313px;top:220px;width:400px;height:20px;text-align:left;font-size:10.0px;line-height:20px;color:#1a1a1a;white-space:pre;"><span style="display:inline-block;transform:translate(0.50px,0.21px) scaleX(0.8170) rotate(0.03deg);transform-origin:left center">D : DÜZ HATTA DURDURUCU</span></div>
<div style="position:absolute;left:313px;top:232px;width:400px;height:20px;text-align:left;font-size:10.0px;line-height:20px;color:#1a1a1a;white-space:pre;"><span style="display:inline-block;transform:translate(0.50px,0.93px) scaleX(0.8170) rotate(0.03deg);transform-origin:left center">KD : KÖŞEDE DURDURUCU</span></div>
<div style="position:absolute;left:313px;top:245px;width:400px;height:20px;text-align:left;font-size:10.0px;line-height:20px;color:#1a1a1a;white-space:pre;"><span style="display:inline-block;transform:translate(0.50px,0.65px) scaleX(0.8170) rotate(0.03deg);transform-origin:left center">N : NİHAYET</span></div>
<div style="position:absolute;left:313px;top:258px;width:400px;height:20px;text-align:left;font-size:10.0px;line-height:20px;color:#1a1a1a;white-space:pre;"><span style="display:inline-block;transform:translate(0.50px,0.37px) scaleX(0.8170) rotate(0.03deg);transform-origin:left center">BR : BRANŞMAN</span></div>
<div style="position:absolute;left:500px;top:182px;width:400px;height:20px;text-align:left;font-size:10.0px;line-height:20px;color:#1a1a1a;white-space:pre;"><span style="display:inline-block;transform:translate(0.50px,0.05px) scaleX(0.8170) rotate(0.03deg);transform-origin:left center">K: KISA ŞAKIL</span></div>
<div style="position:absolute;left:500px;top:194px;width:400px;height:20px;text-align:left;font-size:10.0px;line-height:20px;color:#1a1a1a;white-space:pre;"><span style="display:inline-block;transform:translate(0.50px,0.77px) scaleX(0.8170) rotate(0.03deg);transform-origin:left center">U : UZUN ŞAKIL</span></div>
<div style="position:absolute;left:500px;top:207px;width:400px;height:20px;text-align:left;font-size:10.0px;line-height:20px;color:#1a1a1a;white-space:pre;"><span style="display:inline-block;transform:translate(0.50px,0.49px) scaleX(0.8170) rotate(0.03deg);transform-origin:left center">A : TEK ASKI ZİNCİRİ</span></div>
<div style="position:absolute;left:500px;top:220px;width:400px;height:20px;text-align:left;font-size:10.0px;line-height:20px;color:#1a1a1a;white-space:pre;"><span style="display:inline-block;transform:translate(0.50px,0.21px) scaleX(0.8170) rotate(0.03deg);transform-origin:left center">ÇA : ÇİFT ASKI ZİNCİRİ</span></div>
<div style="position:absolute;left:500px;top:232px;width:400px;height:20px;text-align:left;font-size:10.0px;line-height:20px;color:#1a1a1a;white-space:pre;"><span style="display:inline-block;transform:translate(0.50px,0.93px) scaleX(0.8170) rotate(0.03deg);transform-origin:left center">G : TEK GERGİ TAKIMI</span></div>
<div style="position:absolute;left:500px;top:245px;width:400px;height:20px;text-align:left;font-size:10.0px;line-height:20px;color:#1a1a1a;white-space:pre;"><span style="display:inline-block;transform:translate(0.50px,0.65px) scaleX(0.8170) rotate(0.03deg);transform-origin:left center">ÇG : ÇİFT GERGİ TAKIM</span></div>
<div style="position:absolute;left:-166px;top:290px;width:400px;height:20px;text-align:center;font-size:10.0px;line-height:20px;color:#000;white-space:pre;font-weight:bold;"><span style="display:inline-block;transform:translate(0.90px,0.28px) scaleX(0.8265) rotate(0.03deg);transform-origin:center center">DİREK</span></div>
<div style="position:absolute;left:-166px;top:302px;width:400px;height:20px;text-align:center;font-size:10.0px;line-height:20px;color:#000;white-space:pre;font-weight:bold;"><span style="display:inline-block;transform:translate(0.90px,0.98px) scaleX(0.8265) rotate(0.03deg);transform-origin:center center">NO</span></div>
<div style="position:absolute;left:-130px;top:290px;width:400px;height:20px;text-align:center;font-size:10.0px;line-height:20px;color:#000;white-space:pre;font-weight:bold;"><span style="display:inline-block;transform:translate(0.05px,0.28px) scaleX(0.8265) rotate(0.03deg);transform-origin:center center">BAŞTAN</span></div>
<div style="position:absolute;left:-130px;top:302px;width:400px;height:20px;text-align:center;font-size:10.0px;line-height:20px;color:#000;white-space:pre;font-weight:bold;"><span style="display:inline-block;transform:translate(0.05px,0.98px) scaleX(0.8265) rotate(0.03deg);transform-origin:center center">MESAFE</span></div>
<div style="position:absolute;left:-89px;top:290px;width:400px;height:20px;text-align:center;font-size:10.0px;line-height:20px;color:#000;white-space:pre;font-weight:bold;"><span style="display:inline-block;transform:translate(0.55px,0.28px) scaleX(0.8265) rotate(0.03deg);transform-origin:center center">DİREK</span></div>
<div style="position:absolute;left:-89px;top:302px;width:400px;height:20px;text-align:center;font-size:10.0px;line-height:20px;color:#000;white-space:pre;font-weight:bold;"><span style="display:inline-block;transform:translate(0.55px,0.98px) scaleX(0.8265) rotate(0.03deg);transform-origin:center center">ARA MES.</span></div>
<div style="position:absolute;left:-22px;top:283px;width:400px;height:20px;text-align:center;font-size:10.0px;line-height:20px;color:#000;white-space:pre;font-weight:bold;"><span style="display:inline-block;transform:translate(0.50px,0.81px) scaleX(0.8265) rotate(0.03deg);transform-origin:center center">MENZİLLER (mt.)</span></div>
<div style="position:absolute;left:-52px;top:302px;width:400px;height:20px;text-align:center;font-size:10.0px;line-height:20px;color:#000;white-space:pre;font-weight:bold;"><span style="display:inline-block;transform:translate(0.50px,0.89px) scaleX(0.8265) rotate(0.03deg);transform-origin:center center">aw</span></div>
<div style="position:absolute;left:-22px;top:302px;width:400px;height:20px;text-align:center;font-size:10.0px;line-height:20px;color:#000;white-space:pre;font-weight:bold;"><span style="display:inline-block;transform:translate(0.50px,0.89px) scaleX(0.8265) rotate(0.03deg);transform-origin:center center">ag</span></div>
<div style="position:absolute;left:8px;top:302px;width:400px;height:20px;text-align:center;font-size:10.0px;line-height:20px;color:#000;white-space:pre;font-weight:bold;"><span style="display:inline-block;transform:translate(0.50px,0.89px) scaleX(0.8265) rotate(0.03deg);transform-origin:center center">ar</span></div>
<div style="position:absolute;left:38px;top:283px;width:400px;height:20px;text-align:center;font-size:10.0px;line-height:20px;color:#000;white-space:pre;font-weight:bold;"><span style="display:inline-block;transform:translate(0.45px,0.93px) scaleX(0.8265) rotate(0.03deg);transform-origin:center center">HAT</span></div>
<div style="position:absolute;left:38px;top:296px;width:400px;height:20px;text-align:center;font-size:10.0px;line-height:20px;color:#000;white-space:pre;font-weight:bold;"><span style="display:inline-block;transform:translate(0.45px,0.63px) scaleX(0.8265) rotate(0.03deg);transform-origin:center center">AÇISI</span></div>
<div style="position:absolute;left:38px;top:309px;width:400px;height:20px;text-align:center;font-size:10.0px;line-height:20px;color:#000;white-space:pre;font-weight:bold;"><span style="display:inline-block;transform:translate(0.45px,0.33px) scaleX(0.8265) rotate(0.03deg);transform-origin:center center">(GRD)</span></div>
<div style="position:absolute;left:82px;top:290px;width:400px;height:20px;text-align:center;font-size:10.0px;line-height:20px;color:#000;white-space:pre;font-weight:bold;"><span style="display:inline-block;transform:translate(0.45px,0.28px) scaleX(0.8265) rotate(0.03deg);transform-origin:center center">GEÇİŞ</span></div>
<div style="position:absolute;left:82px;top:302px;width:400px;height:20px;text-align:center;font-size:10.0px;line-height:20px;color:#000;white-space:pre;font-weight:bold;"><span style="display:inline-block;transform:translate(0.45px,0.98px) scaleX(0.8265) rotate(0.03deg);transform-origin:center center">ATLAMA</span></div>
<div style="position:absolute;left:175px;top:283px;width:400px;height:20px;text-align:center;font-size:10.0px;line-height:20px;color:#000;white-space:pre;font-weight:bold;"><span style="display:inline-block;transform:translate(0.00px,0.81px) scaleX(0.8265) rotate(0.03deg);transform-origin:center center">DİREK</span></div>
<div style="position:absolute;left:130px;top:296px;width:400px;height:20px;text-align:center;font-size:10.0px;line-height:20px;color:#000;white-space:pre;font-weight:bold;"><span style="display:inline-block;transform:translate(0.05px,0.64px) scaleX(0.8265) rotate(0.03deg);transform-origin:center center">NAKİL</span></div>
<div style="position:absolute;left:130px;top:309px;width:400px;height:20px;text-align:center;font-size:10.0px;line-height:20px;color:#000;white-space:pre;font-weight:bold;"><span style="display:inline-block;transform:translate(0.05px,0.34px) scaleX(0.8265) rotate(0.03deg);transform-origin:center center">TESBİTİ</span></div>
<div style="position:absolute;left:167px;top:302px;width:400px;height:20px;text-align:center;font-size:10.0px;line-height:20px;color:#000;white-space:pre;font-weight:bold;"><span style="display:inline-block;transform:translate(0.00px,0.89px) scaleX(0.8265) rotate(0.03deg);transform-origin:center center">FONKS.</span></div>
<div style="position:absolute;left:203px;top:302px;width:400px;height:20px;text-align:center;font-size:10.0px;line-height:20px;color:#000;white-space:pre;font-weight:bold;"><span style="display:inline-block;transform:translate(0.50px,0.89px) scaleX(0.8265) rotate(0.03deg);transform-origin:center center">TİPİ</span></div>
<div style="position:absolute;left:230px;top:302px;width:400px;height:20px;text-align:center;font-size:10.0px;line-height:20px;color:#000;white-space:pre;font-weight:bold;"><span style="display:inline-block;transform:translate(0.05px,0.89px) scaleX(0.8265) rotate(0.03deg);transform-origin:center center">NO</span></div>
<div style="position:absolute;left:268px;top:283px;width:400px;height:20px;text-align:center;font-size:10.0px;line-height:20px;color:#000;white-space:pre;font-weight:bold;"><span style="display:inline-block;transform:translate(0.50px,0.93px) scaleX(0.8265) rotate(0.03deg);transform-origin:center center">DEMİR</span></div>
<div style="position:absolute;left:268px;top:296px;width:400px;height:20px;text-align:center;font-size:10.0px;line-height:20px;color:#000;white-space:pre;font-weight:bold;"><span style="display:inline-block;transform:translate(0.50px,0.63px) scaleX(0.8265) rotate(0.03deg);transform-origin:center center">DİREKLERDE</span></div>
<div style="position:absolute;left:268px;top:309px;width:400px;height:20px;text-align:center;font-size:10.0px;line-height:20px;color:#000;white-space:pre;font-weight:bold;"><span style="display:inline-block;transform:translate(0.50px,0.33px) scaleX(0.8265) rotate(0.03deg);transform-origin:center center">FARKLI AYAK</span></div>
<div style="position:absolute;left:369px;top:283px;width:400px;height:20px;text-align:center;font-size:10.0px;line-height:20px;color:#000;white-space:pre;font-weight:bold;"><span style="display:inline-block;transform:translate(0.50px,0.81px) scaleX(0.8265) rotate(0.03deg);transform-origin:center center">DİREKLERDE</span></div>
<div style="position:absolute;left:314px;top:296px;width:400px;height:20px;text-align:center;font-size:10.0px;line-height:20px;color:#000;white-space:pre;font-weight:bold;"><span style="display:inline-block;transform:translate(0.15px,0.64px) scaleX(0.8265) rotate(0.03deg);transform-origin:center center">ÜST</span></div>
<div style="position:absolute;left:314px;top:309px;width:400px;height:20px;text-align:center;font-size:10.0px;line-height:20px;color:#000;white-space:pre;font-weight:bold;"><span style="display:inline-block;transform:translate(0.15px,0.34px) scaleX(0.8265) rotate(0.03deg);transform-origin:center center">KONS.</span></div>
<div style="position:absolute;left:345px;top:296px;width:400px;height:20px;text-align:center;font-size:10.0px;line-height:20px;color:#000;white-space:pre;font-weight:bold;"><span style="display:inline-block;transform:translate(0.55px,0.64px) scaleX(0.8265) rotate(0.03deg);transform-origin:center center">ORTA</span></div>
<div style="position:absolute;left:345px;top:309px;width:400px;height:20px;text-align:center;font-size:10.0px;line-height:20px;color:#000;white-space:pre;font-weight:bold;"><span style="display:inline-block;transform:translate(0.55px,0.34px) scaleX(0.8265) rotate(0.03deg);transform-origin:center center">KONS.</span></div>
<div style="position:absolute;left:376px;top:296px;width:400px;height:20px;text-align:center;font-size:10.0px;line-height:20px;color:#000;white-space:pre;font-weight:bold;"><span style="display:inline-block;transform:translate(0.90px,0.64px) scaleX(0.8265) rotate(0.03deg);transform-origin:center center">ALT</span></div>
<div style="position:absolute;left:376px;top:309px;width:400px;height:20px;text-align:center;font-size:10.0px;line-height:20px;color:#000;white-space:pre;font-weight:bold;"><span style="display:inline-block;transform:translate(0.90px,0.34px) scaleX(0.8265) rotate(0.03deg);transform-origin:center center">KONS.</span></div>
<div style="position:absolute;left:416px;top:296px;width:400px;height:20px;text-align:center;font-size:10.0px;line-height:20px;color:#000;white-space:pre;font-weight:bold;"><span style="display:inline-block;transform:translate(0.50px,0.64px) scaleX(0.8265) rotate(0.03deg);transform-origin:center center">TORSİYON</span></div>
<div style="position:absolute;left:416px;top:309px;width:400px;height:20px;text-align:center;font-size:10.0px;line-height:20px;color:#000;white-space:pre;font-weight:bold;"><span style="display:inline-block;transform:translate(0.50px,0.34px) scaleX(0.8265) rotate(0.03deg);transform-origin:center center">(kgm)</span></div>
<div style="position:absolute;left:470px;top:283px;width:400px;height:20px;text-align:center;font-size:10.0px;line-height:20px;color:#000;white-space:pre;font-weight:bold;"><span style="display:inline-block;transform:translate(0.50px,0.93px) scaleX(0.8265) rotate(0.03deg);transform-origin:center center">TOPRAK</span></div>
<div style="position:absolute;left:470px;top:296px;width:400px;height:20px;text-align:center;font-size:10.0px;line-height:20px;color:#000;white-space:pre;font-weight:bold;"><span style="display:inline-block;transform:translate(0.50px,0.63px) scaleX(0.8265) rotate(0.03deg);transform-origin:center center">ÜSTÜ</span></div>
<div style="position:absolute;left:470px;top:309px;width:400px;height:20px;text-align:center;font-size:10.0px;line-height:20px;color:#000;white-space:pre;font-weight:bold;"><span style="display:inline-block;transform:translate(0.50px,0.33px) scaleX(0.8265) rotate(0.03deg);transform-origin:center center">TAM BOYU(m)</span></div>
<div style="position:absolute;left:516px;top:290px;width:400px;height:20px;text-align:center;font-size:10.0px;line-height:20px;color:#000;white-space:pre;font-weight:bold;"><span style="display:inline-block;transform:translate(0.00px,0.28px) scaleX(0.8265) rotate(0.03deg);transform-origin:center center">TRVS.</span></div>
<div style="position:absolute;left:516px;top:302px;width:400px;height:20px;text-align:center;font-size:10.0px;line-height:20px;color:#000;white-space:pre;font-weight:bold;"><span style="display:inline-block;transform:translate(0.00px,0.98px) scaleX(0.8265) rotate(0.03deg);transform-origin:center center">TER.</span></div>
<div style="position:absolute;left:570px;top:290px;width:400px;height:20px;text-align:center;font-size:10.0px;line-height:20px;color:#000;white-space:pre;font-weight:bold;"><span style="display:inline-block;transform:translate(0.95px,0.28px) scaleX(0.8265) rotate(0.03deg);transform-origin:center center">TEMEL</span></div>
<div style="position:absolute;left:570px;top:302px;width:400px;height:20px;text-align:center;font-size:10.0px;line-height:20px;color:#000;white-space:pre;font-weight:bold;"><span style="display:inline-block;transform:translate(0.95px,0.98px) scaleX(0.8265) rotate(0.03deg);transform-origin:center center">TİPİ</span></div>
<div style="position:absolute;left:621px;top:296px;width:400px;height:20px;text-align:center;font-size:10.0px;line-height:20px;color:#000;white-space:pre;font-weight:bold;"><span style="display:inline-block;transform:translate(0.90px,0.53px) scaleX(0.8265) rotate(0.03deg);transform-origin:center center">DUR</span></div>
<div style="position:absolute;left:657px;top:296px;width:400px;height:20px;text-align:center;font-size:10.0px;line-height:20px;color:#000;white-space:pre;font-weight:bold;"><span style="display:inline-block;transform:translate(0.50px,0.53px) scaleX(0.8265) rotate(0.03deg);transform-origin:center center">AÇIKLAMA</span></div>
<div style="position:absolute;left:705px;top:290px;width:400px;height:20px;text-align:center;font-size:10.0px;line-height:20px;color:#000;white-space:pre;font-weight:bold;"><span style="display:inline-block;transform:translate(0.60px,0.28px) scaleX(0.8265) rotate(0.03deg);transform-origin:center center">BUZ YÜKÜ</span></div>
<div style="position:absolute;left:705px;top:302px;width:400px;height:20px;text-align:center;font-size:10.0px;line-height:20px;color:#000;white-space:pre;font-weight:bold;"><span style="display:inline-block;transform:translate(0.60px,0.98px) scaleX(0.8265) rotate(0.03deg);transform-origin:center center">BÖLGESİ</span></div>
<div style="position:absolute;left:764px;top:290px;width:400px;height:20px;text-align:center;font-size:10.0px;line-height:20px;color:#000;white-space:pre;font-weight:bold;"><span style="display:inline-block;transform:translate(0.30px,0.28px) scaleX(0.8265) rotate(0.03deg);transform-origin:center center">İZOLATÖR</span></div>
<div style="position:absolute;left:764px;top:302px;width:400px;height:20px;text-align:center;font-size:10.0px;line-height:20px;color:#000;white-space:pre;font-weight:bold;"><span style="display:inline-block;transform:translate(0.30px,0.98px) scaleX(0.8265) rotate(0.03deg);transform-origin:center center">TİPİ</span></div>
<div style="position:absolute;left:-166px;top:328px;width:400px;height:20px;text-align:center;font-size:10.0px;line-height:20px;color:#1a1a1a;white-space:pre;"><span style="display:inline-block;transform:translate(0.90px,0.33px) scaleX(0.7790) rotate(0.03deg);transform-origin:center center">1</span></div>
<div style="position:absolute;left:-130px;top:328px;width:400px;height:20px;text-align:center;font-size:10.0px;line-height:20px;color:#1a1a1a;white-space:pre;"><span style="display:inline-block;transform:translate(0.05px,0.33px) scaleX(0.7790) rotate(0.03deg);transform-origin:center center">0.00</span></div>
<div style="position:absolute;left:-52px;top:328px;width:400px;height:20px;text-align:center;font-size:10.0px;line-height:20px;color:#1a1a1a;white-space:pre;"><span style="display:inline-block;transform:translate(0.50px,0.33px) scaleX(0.7790) rotate(0.03deg);transform-origin:center center">27.86</span></div>
<div style="position:absolute;left:-22px;top:328px;width:400px;height:20px;text-align:center;font-size:10.0px;line-height:20px;color:#1a1a1a;white-space:pre;"><span style="display:inline-block;transform:translate(0.50px,0.33px) scaleX(0.7790) rotate(0.03deg);transform-origin:center center">7.07</span></div>
<div style="position:absolute;left:130px;top:328px;width:400px;height:20px;text-align:center;font-size:10.0px;line-height:20px;color:#1a1a1a;white-space:pre;"><span style="display:inline-block;transform:translate(0.05px,0.33px) scaleX(0.7790) rotate(0.03deg);transform-origin:center center">G</span></div>
<div style="position:absolute;left:167px;top:328px;width:400px;height:20px;text-align:center;font-size:10.0px;line-height:20px;color:#1a1a1a;white-space:pre;"><span style="display:inline-block;transform:translate(0.00px,0.33px) scaleX(0.7790) rotate(0.03deg);transform-origin:center center">N</span></div>
<div style="position:absolute;left:230px;top:328px;width:400px;height:20px;text-align:center;font-size:10.0px;line-height:20px;color:#1a1a1a;white-space:pre;"><span style="display:inline-block;transform:translate(0.05px,0.33px) scaleX(0.7790) rotate(0.03deg);transform-origin:center center">1</span></div>
<div style="position:absolute;left:470px;top:328px;width:400px;height:20px;text-align:center;font-size:10.0px;line-height:20px;color:#1a1a1a;white-space:pre;"><span style="display:inline-block;transform:translate(0.50px,0.33px) scaleX(0.7790) rotate(0.03deg);transform-origin:center center">10.2</span></div>
<div style="position:absolute;left:516px;top:328px;width:400px;height:20px;text-align:center;font-size:10.0px;line-height:20px;color:#1a1a1a;white-space:pre;"><span style="display:inline-block;transform:translate(0.00px,0.33px) scaleX(0.8295) rotate(0.03deg);transform-origin:center center">D-DUZ</span></div>
<div style="position:absolute;left:570px;top:328px;width:400px;height:20px;text-align:center;font-size:10.0px;line-height:20px;color:#1a1a1a;white-space:pre;"><span style="display:inline-block;transform:translate(0.95px,0.33px) scaleX(0.8051) rotate(0.03deg);transform-origin:center center">130x130 , Kare Blok</span></div>
<div style="position:absolute;left:621px;top:328px;width:400px;height:20px;text-align:center;font-size:10.0px;line-height:20px;color:#1a1a1a;white-space:pre;"><span style="display:inline-block;transform:translate(0.90px,0.33px) scaleX(0.7790) rotate(0.03deg);transform-origin:center center">X</span></div>
<div style="position:absolute;left:657px;top:328px;width:400px;height:20px;text-align:center;font-size:10.0px;line-height:20px;color:#1a1a1a;white-space:pre;"><span style="display:inline-block;transform:translate(0.50px,0.33px) scaleX(0.7790) rotate(0.03deg);transform-origin:center center">DS-250</span></div>
<div style="position:absolute;left:705px;top:328px;width:400px;height:20px;text-align:center;font-size:10.0px;line-height:20px;color:#1a1a1a;white-space:pre;"><span style="display:inline-block;transform:translate(0.60px,0.33px) scaleX(0.7790) rotate(0.03deg);transform-origin:center center">2</span></div>
<div style="position:absolute;left:764px;top:328px;width:400px;height:20px;text-align:center;font-size:10.0px;line-height:20px;color:#1a1a1a;white-space:pre;"><span style="display:inline-block;transform:translate(0.30px,0.33px) scaleX(0.7790) rotate(0.03deg);transform-origin:center center">-/1S40/-</span></div>
<div style="position:absolute;left:501px;top:328px;width:400px;height:20px;text-align:left;font-size:10.0px;line-height:20px;color:#1a1a1a;white-space:pre;"><span style="display:inline-block;transform:translate(0.90px,0.33px) scaleX(0.8360) rotate(0.03deg);transform-origin:left center">D -250</span></div>
<div style="position:absolute;left:203px;top:322px;width:400px;height:20px;text-align:center;font-size:10.0px;line-height:20px;color:#1a1a1a;white-space:pre;"><span style="display:inline-block;transform:translate(0.50px,0.43px) scaleX(0.7790) rotate(0.03deg);transform-origin:center center">NS-12</span></div>
<div style="position:absolute;left:203px;top:334px;width:400px;height:20px;text-align:center;font-size:10.0px;line-height:20px;color:#1a1a1a;white-space:pre;"><span style="display:inline-block;transform:translate(0.50px,0.23px) scaleX(0.7790) rotate(0.03deg);transform-origin:center center">(3 AWG)</span></div>
<div style="position:absolute;left:-166px;top:353px;width:400px;height:20px;text-align:center;font-size:10.0px;line-height:20px;color:#1a1a1a;white-space:pre;"><span style="display:inline-block;transform:translate(0.90px,0.77px) scaleX(0.7790) rotate(0.03deg);transform-origin:center center">2</span></div>
<div style="position:absolute;left:-130px;top:353px;width:400px;height:20px;text-align:center;font-size:10.0px;line-height:20px;color:#1a1a1a;white-space:pre;"><span style="display:inline-block;transform:translate(0.05px,0.77px) scaleX(0.7790) rotate(0.03deg);transform-origin:center center">55.72</span></div>
<div style="position:absolute;left:-52px;top:353px;width:400px;height:20px;text-align:center;font-size:10.0px;line-height:20px;color:#1a1a1a;white-space:pre;"><span style="display:inline-block;transform:translate(0.50px,0.77px) scaleX(0.7790) rotate(0.03deg);transform-origin:center center">59.67</span></div>
<div style="position:absolute;left:-22px;top:353px;width:400px;height:20px;text-align:center;font-size:10.0px;line-height:20px;color:#1a1a1a;white-space:pre;"><span style="display:inline-block;transform:translate(0.50px,0.77px) scaleX(0.7790) rotate(0.03deg);transform-origin:center center">73.43</span></div>
<div style="position:absolute;left:38px;top:353px;width:400px;height:20px;text-align:center;font-size:10.0px;line-height:20px;color:#1a1a1a;white-space:pre;"><span style="display:inline-block;transform:translate(0.45px,0.77px) scaleX(0.7790) rotate(0.03deg);transform-origin:center center">223.50</span></div>
<div style="position:absolute;left:130px;top:353px;width:400px;height:20px;text-align:center;font-size:10.0px;line-height:20px;color:#1a1a1a;white-space:pre;"><span style="display:inline-block;transform:translate(0.05px,0.77px) scaleX(0.7790) rotate(0.03deg);transform-origin:center center">G-M-G</span></div>
<div style="position:absolute;left:167px;top:353px;width:400px;height:20px;text-align:center;font-size:10.0px;line-height:20px;color:#1a1a1a;white-space:pre;"><span style="display:inline-block;transform:translate(0.00px,0.77px) scaleX(0.7790) rotate(0.03deg);transform-origin:center center">KD</span></div>
<div style="position:absolute;left:230px;top:353px;width:400px;height:20px;text-align:center;font-size:10.0px;line-height:20px;color:#1a1a1a;white-space:pre;"><span style="display:inline-block;transform:translate(0.05px,0.77px) scaleX(0.7790) rotate(0.03deg);transform-origin:center center">2</span></div>
<div style="position:absolute;left:470px;top:353px;width:400px;height:20px;text-align:center;font-size:10.0px;line-height:20px;color:#1a1a1a;white-space:pre;"><span style="display:inline-block;transform:translate(0.50px,0.77px) scaleX(0.7790) rotate(0.03deg);transform-origin:center center">10.2</span></div>
<div style="position:absolute;left:516px;top:353px;width:400px;height:20px;text-align:center;font-size:10.0px;line-height:20px;color:#1a1a1a;white-space:pre;"><span style="display:inline-block;transform:translate(0.00px,0.77px) scaleX(0.8295) rotate(0.03deg);transform-origin:center center">D-DUZ</span></div>
<div style="position:absolute;left:570px;top:353px;width:400px;height:20px;text-align:center;font-size:10.0px;line-height:20px;color:#1a1a1a;white-space:pre;"><span style="display:inline-block;transform:translate(0.95px,0.77px) scaleX(0.8051) rotate(0.03deg);transform-origin:center center">130x130 , Kare Blok</span></div>
<div style="position:absolute;left:621px;top:353px;width:400px;height:20px;text-align:center;font-size:10.0px;line-height:20px;color:#1a1a1a;white-space:pre;"><span style="display:inline-block;transform:translate(0.90px,0.77px) scaleX(0.7790) rotate(0.03deg);transform-origin:center center">X</span></div>
<div style="position:absolute;left:705px;top:353px;width:400px;height:20px;text-align:center;font-size:10.0px;line-height:20px;color:#1a1a1a;white-space:pre;"><span style="display:inline-block;transform:translate(0.60px,0.77px) scaleX(0.7790) rotate(0.03deg);transform-origin:center center">2</span></div>
<div style="position:absolute;left:764px;top:353px;width:400px;height:20px;text-align:center;font-size:10.0px;line-height:20px;color:#1a1a1a;white-space:pre;"><span style="display:inline-block;transform:translate(0.30px,0.77px) scaleX(0.7892) rotate(0.03deg);transform-origin:center center">1S40/1VHD/1S40</span></div>
<div style="position:absolute;left:501px;top:353px;width:400px;height:20px;text-align:left;font-size:10.0px;line-height:20px;color:#1a1a1a;white-space:pre;"><span style="display:inline-block;transform:translate(0.90px,0.77px) scaleX(0.8360) rotate(0.03deg);transform-origin:left center">D -250</span></div>
<div style="position:absolute;left:203px;top:347px;width:400px;height:20px;text-align:center;font-size:10.0px;line-height:20px;color:#1a1a1a;white-space:pre;"><span style="display:inline-block;transform:translate(0.50px,0.87px) scaleX(0.7790) rotate(0.03deg);transform-origin:center center">N-12</span></div>
<div style="position:absolute;left:203px;top:359px;width:400px;height:20px;text-align:center;font-size:10.0px;line-height:20px;color:#1a1a1a;white-space:pre;"><span style="display:inline-block;transform:translate(0.50px,0.67px) scaleX(0.7790) rotate(0.03deg);transform-origin:center center">(3 AWG)</span></div>
<div style="position:absolute;left:-166px;top:379px;width:400px;height:20px;text-align:center;font-size:10.0px;line-height:20px;color:#1a1a1a;white-space:pre;"><span style="display:inline-block;transform:translate(0.90px,0.21px) scaleX(0.7790) rotate(0.03deg);transform-origin:center center">3</span></div>
<div style="position:absolute;left:-130px;top:379px;width:400px;height:20px;text-align:center;font-size:10.0px;line-height:20px;color:#1a1a1a;white-space:pre;"><span style="display:inline-block;transform:translate(0.05px,0.21px) scaleX(0.7790) rotate(0.03deg);transform-origin:center center">119.34</span></div>
<div style="position:absolute;left:-52px;top:379px;width:400px;height:20px;text-align:center;font-size:10.0px;line-height:20px;color:#1a1a1a;white-space:pre;"><span style="display:inline-block;transform:translate(0.50px,0.21px) scaleX(0.7790) rotate(0.03deg);transform-origin:center center">59.96</span></div>
<div style="position:absolute;left:-22px;top:379px;width:400px;height:20px;text-align:center;font-size:10.0px;line-height:20px;color:#1a1a1a;white-space:pre;"><span style="display:inline-block;transform:translate(0.50px,0.21px) scaleX(0.7790) rotate(0.03deg);transform-origin:center center">69.49</span></div>
<div style="position:absolute;left:38px;top:379px;width:400px;height:20px;text-align:center;font-size:10.0px;line-height:20px;color:#1a1a1a;white-space:pre;"><span style="display:inline-block;transform:translate(0.45px,0.21px) scaleX(0.7790) rotate(0.03deg);transform-origin:center center">219.32</span></div>
<div style="position:absolute;left:130px;top:379px;width:400px;height:20px;text-align:center;font-size:10.0px;line-height:20px;color:#1a1a1a;white-space:pre;"><span style="display:inline-block;transform:translate(0.05px,0.21px) scaleX(0.7790) rotate(0.03deg);transform-origin:center center">G-M-G</span></div>
<div style="position:absolute;left:167px;top:379px;width:400px;height:20px;text-align:center;font-size:10.0px;line-height:20px;color:#1a1a1a;white-space:pre;"><span style="display:inline-block;transform:translate(0.00px,0.21px) scaleX(0.7790) rotate(0.03deg);transform-origin:center center">KD</span></div>
<div style="position:absolute;left:230px;top:379px;width:400px;height:20px;text-align:center;font-size:10.0px;line-height:20px;color:#1a1a1a;white-space:pre;"><span style="display:inline-block;transform:translate(0.05px,0.21px) scaleX(0.7790) rotate(0.03deg);transform-origin:center center">3</span></div>
<div style="position:absolute;left:470px;top:379px;width:400px;height:20px;text-align:center;font-size:10.0px;line-height:20px;color:#1a1a1a;white-space:pre;"><span style="display:inline-block;transform:translate(0.50px,0.21px) scaleX(0.7790) rotate(0.03deg);transform-origin:center center">10.2</span></div>
<div style="position:absolute;left:516px;top:379px;width:400px;height:20px;text-align:center;font-size:10.0px;line-height:20px;color:#1a1a1a;white-space:pre;"><span style="display:inline-block;transform:translate(0.00px,0.21px) scaleX(0.8295) rotate(0.03deg);transform-origin:center center">D-DUZ</span></div>
<div style="position:absolute;left:570px;top:379px;width:400px;height:20px;text-align:center;font-size:10.0px;line-height:20px;color:#1a1a1a;white-space:pre;"><span style="display:inline-block;transform:translate(0.95px,0.21px) scaleX(0.8051) rotate(0.03deg);transform-origin:center center">130x130 , Kare Blok</span></div>
<div style="position:absolute;left:621px;top:379px;width:400px;height:20px;text-align:center;font-size:10.0px;line-height:20px;color:#1a1a1a;white-space:pre;"><span style="display:inline-block;transform:translate(0.90px,0.21px) scaleX(0.7790) rotate(0.03deg);transform-origin:center center">X</span></div>
<div style="position:absolute;left:705px;top:379px;width:400px;height:20px;text-align:center;font-size:10.0px;line-height:20px;color:#1a1a1a;white-space:pre;"><span style="display:inline-block;transform:translate(0.60px,0.21px) scaleX(0.7790) rotate(0.03deg);transform-origin:center center">2</span></div>
<div style="position:absolute;left:764px;top:379px;width:400px;height:20px;text-align:center;font-size:10.0px;line-height:20px;color:#1a1a1a;white-space:pre;"><span style="display:inline-block;transform:translate(0.30px,0.21px) scaleX(0.7892) rotate(0.03deg);transform-origin:center center">1S40/1VHD/1S40</span></div>
<div style="position:absolute;left:501px;top:379px;width:400px;height:20px;text-align:left;font-size:10.0px;line-height:20px;color:#1a1a1a;white-space:pre;"><span style="display:inline-block;transform:translate(0.90px,0.21px) scaleX(0.8360) rotate(0.03deg);transform-origin:left center">D -250</span></div>
<div style="position:absolute;left:203px;top:373px;width:400px;height:20px;text-align:center;font-size:10.0px;line-height:20px;color:#1a1a1a;white-space:pre;"><span style="display:inline-block;transform:translate(0.50px,0.31px) scaleX(0.7790) rotate(0.03deg);transform-origin:center center">N-12</span></div>
<div style="position:absolute;left:203px;top:385px;width:400px;height:20px;text-align:center;font-size:10.0px;line-height:20px;color:#1a1a1a;white-space:pre;"><span style="display:inline-block;transform:translate(0.50px,0.11px) scaleX(0.7790) rotate(0.03deg);transform-origin:center center">(3 AWG)</span></div>
<div style="position:absolute;left:-166px;top:404px;width:400px;height:20px;text-align:center;font-size:10.0px;line-height:20px;color:#1a1a1a;white-space:pre;"><span style="display:inline-block;transform:translate(0.90px,0.65px) scaleX(0.7790) rotate(0.03deg);transform-origin:center center">4</span></div>
<div style="position:absolute;left:-130px;top:404px;width:400px;height:20px;text-align:center;font-size:10.0px;line-height:20px;color:#1a1a1a;white-space:pre;"><span style="display:inline-block;transform:translate(0.05px,0.65px) scaleX(0.7790) rotate(0.03deg);transform-origin:center center">175.64</span></div>
<div style="position:absolute;left:-52px;top:404px;width:400px;height:20px;text-align:center;font-size:10.0px;line-height:20px;color:#1a1a1a;white-space:pre;"><span style="display:inline-block;transform:translate(0.50px,0.65px) scaleX(0.7790) rotate(0.03deg);transform-origin:center center">68.28</span></div>
<div style="position:absolute;left:-22px;top:404px;width:400px;height:20px;text-align:center;font-size:10.0px;line-height:20px;color:#1a1a1a;white-space:pre;"><span style="display:inline-block;transform:translate(0.50px,0.65px) scaleX(0.7790) rotate(0.03deg);transform-origin:center center">14.77</span></div>
<div style="position:absolute;left:38px;top:404px;width:400px;height:20px;text-align:center;font-size:10.0px;line-height:20px;color:#1a1a1a;white-space:pre;"><span style="display:inline-block;transform:translate(0.45px,0.65px) scaleX(0.7790) rotate(0.03deg);transform-origin:center center">185.46</span></div>
<div style="position:absolute;left:130px;top:404px;width:400px;height:20px;text-align:center;font-size:10.0px;line-height:20px;color:#1a1a1a;white-space:pre;"><span style="display:inline-block;transform:translate(0.05px,0.65px) scaleX(0.7790) rotate(0.03deg);transform-origin:center center">G-M-G</span></div>
<div style="position:absolute;left:167px;top:404px;width:400px;height:20px;text-align:center;font-size:10.0px;line-height:20px;color:#1a1a1a;white-space:pre;"><span style="display:inline-block;transform:translate(0.00px,0.65px) scaleX(0.7790) rotate(0.03deg);transform-origin:center center">KD</span></div>
<div style="position:absolute;left:230px;top:404px;width:400px;height:20px;text-align:center;font-size:10.0px;line-height:20px;color:#1a1a1a;white-space:pre;"><span style="display:inline-block;transform:translate(0.05px,0.65px) scaleX(0.7790) rotate(0.03deg);transform-origin:center center">4</span></div>
<div style="position:absolute;left:470px;top:404px;width:400px;height:20px;text-align:center;font-size:10.0px;line-height:20px;color:#1a1a1a;white-space:pre;"><span style="display:inline-block;transform:translate(0.50px,0.65px) scaleX(0.7790) rotate(0.03deg);transform-origin:center center">10.2</span></div>
<div style="position:absolute;left:516px;top:404px;width:400px;height:20px;text-align:center;font-size:10.0px;line-height:20px;color:#1a1a1a;white-space:pre;"><span style="display:inline-block;transform:translate(0.00px,0.65px) scaleX(0.8295) rotate(0.03deg);transform-origin:center center">D-DUZ</span></div>
<div style="position:absolute;left:570px;top:404px;width:400px;height:20px;text-align:center;font-size:10.0px;line-height:20px;color:#1a1a1a;white-space:pre;"><span style="display:inline-block;transform:translate(0.95px,0.65px) scaleX(0.8051) rotate(0.03deg);transform-origin:center center">130x130 , Kare Blok</span></div>
<div style="position:absolute;left:621px;top:404px;width:400px;height:20px;text-align:center;font-size:10.0px;line-height:20px;color:#1a1a1a;white-space:pre;"><span style="display:inline-block;transform:translate(0.90px,0.65px) scaleX(0.7790) rotate(0.03deg);transform-origin:center center">X</span></div>
<div style="position:absolute;left:705px;top:404px;width:400px;height:20px;text-align:center;font-size:10.0px;line-height:20px;color:#1a1a1a;white-space:pre;"><span style="display:inline-block;transform:translate(0.60px,0.65px) scaleX(0.7790) rotate(0.03deg);transform-origin:center center">2</span></div>
<div style="position:absolute;left:764px;top:404px;width:400px;height:20px;text-align:center;font-size:10.0px;line-height:20px;color:#1a1a1a;white-space:pre;"><span style="display:inline-block;transform:translate(0.30px,0.65px) scaleX(0.7892) rotate(0.03deg);transform-origin:center center">1S40/1VHD/1S40</span></div>
<div style="position:absolute;left:501px;top:404px;width:400px;height:20px;text-align:left;font-size:10.0px;line-height:20px;color:#1a1a1a;white-space:pre;"><span style="display:inline-block;transform:translate(0.90px,0.65px) scaleX(0.8360) rotate(0.03deg);transform-origin:left center">D -250</span></div>
<div style="position:absolute;left:203px;top:398px;width:400px;height:20px;text-align:center;font-size:10.0px;line-height:20px;color:#1a1a1a;white-space:pre;"><span style="display:inline-block;transform:translate(0.50px,0.75px) scaleX(0.7790) rotate(0.03deg);transform-origin:center center">N-12</span></div>
<div style="position:absolute;left:203px;top:410px;width:400px;height:20px;text-align:center;font-size:10.0px;line-height:20px;color:#1a1a1a;white-space:pre;"><span style="display:inline-block;transform:translate(0.50px,0.55px) scaleX(0.7790) rotate(0.03deg);transform-origin:center center">(3 AWG)</span></div>
<div style="position:absolute;left:-166px;top:430px;width:400px;height:20px;text-align:center;font-size:10.0px;line-height:20px;color:#1a1a1a;white-space:pre;"><span style="display:inline-block;transform:translate(0.90px,0.09px) scaleX(0.7790) rotate(0.03deg);transform-origin:center center">5</span></div>
<div style="position:absolute;left:-130px;top:430px;width:400px;height:20px;text-align:center;font-size:10.0px;line-height:20px;color:#1a1a1a;white-space:pre;"><span style="display:inline-block;transform:translate(0.05px,0.09px) scaleX(0.7790) rotate(0.03deg);transform-origin:center center">255.89</span></div>
<div style="position:absolute;left:-52px;top:430px;width:400px;height:20px;text-align:center;font-size:10.0px;line-height:20px;color:#1a1a1a;white-space:pre;"><span style="display:inline-block;transform:translate(0.50px,0.09px) scaleX(0.7790) rotate(0.03deg);transform-origin:center center">188.46</span></div>
<div style="position:absolute;left:-22px;top:430px;width:400px;height:20px;text-align:center;font-size:10.0px;line-height:20px;color:#1a1a1a;white-space:pre;"><span style="display:inline-block;transform:translate(0.50px,0.09px) scaleX(0.7790) rotate(0.03deg);transform-origin:center center">240.02</span></div>
<div style="position:absolute;left:38px;top:430px;width:400px;height:20px;text-align:center;font-size:10.0px;line-height:20px;color:#1a1a1a;white-space:pre;"><span style="display:inline-block;transform:translate(0.45px,0.09px) scaleX(0.7790) rotate(0.03deg);transform-origin:center center">204.30</span></div>
<div style="position:absolute;left:130px;top:430px;width:400px;height:20px;text-align:center;font-size:10.0px;line-height:20px;color:#1a1a1a;white-space:pre;"><span style="display:inline-block;transform:translate(0.05px,0.09px) scaleX(0.7790) rotate(0.03deg);transform-origin:center center">G-ÇG</span></div>
<div style="position:absolute;left:167px;top:430px;width:400px;height:20px;text-align:center;font-size:10.0px;line-height:20px;color:#1a1a1a;white-space:pre;"><span style="display:inline-block;transform:translate(0.00px,0.09px) scaleX(0.7790) rotate(0.03deg);transform-origin:center center">KD</span></div>
<div style="position:absolute;left:230px;top:430px;width:400px;height:20px;text-align:center;font-size:10.0px;line-height:20px;color:#1a1a1a;white-space:pre;"><span style="display:inline-block;transform:translate(0.05px,0.09px) scaleX(0.7790) rotate(0.03deg);transform-origin:center center">5</span></div>
<div style="position:absolute;left:470px;top:430px;width:400px;height:20px;text-align:center;font-size:10.0px;line-height:20px;color:#1a1a1a;white-space:pre;"><span style="display:inline-block;transform:translate(0.50px,0.09px) scaleX(0.7790) rotate(0.03deg);transform-origin:center center">19.42</span></div>
<div style="position:absolute;left:621px;top:430px;width:400px;height:20px;text-align:center;font-size:10.0px;line-height:20px;color:#1a1a1a;white-space:pre;"><span style="display:inline-block;transform:translate(0.90px,0.09px) scaleX(0.7790) rotate(0.03deg);transform-origin:center center">X</span></div>
<div style="position:absolute;left:705px;top:430px;width:400px;height:20px;text-align:center;font-size:10.0px;line-height:20px;color:#1a1a1a;white-space:pre;"><span style="display:inline-block;transform:translate(0.60px,0.09px) scaleX(0.7790) rotate(0.03deg);transform-origin:center center">2</span></div>
<div style="position:absolute;left:764px;top:430px;width:400px;height:20px;text-align:center;font-size:10.0px;line-height:20px;color:#1a1a1a;white-space:pre;"><span style="display:inline-block;transform:translate(0.30px,0.09px) scaleX(0.7790) rotate(0.03deg);transform-origin:center center">1S40/-/2x1S40</span></div>
<div style="position:absolute;left:203px;top:430px;width:400px;height:20px;text-align:center;font-size:10.0px;line-height:20px;color:#1a1a1a;white-space:pre;"><span style="display:inline-block;transform:translate(0.50px,0.09px) scaleX(0.7790) rotate(0.03deg);transform-origin:center center">KRD1+4</span></div>
<div style="position:absolute;left:-166px;top:455px;width:400px;height:20px;text-align:center;font-size:10.0px;line-height:20px;color:#1a1a1a;white-space:pre;"><span style="display:inline-block;transform:translate(0.90px,0.53px) scaleX(0.7790) rotate(0.03deg);transform-origin:center center">6</span></div>
<div style="position:absolute;left:-130px;top:455px;width:400px;height:20px;text-align:center;font-size:10.0px;line-height:20px;color:#1a1a1a;white-space:pre;"><span style="display:inline-block;transform:translate(0.05px,0.53px) scaleX(0.7790) rotate(0.03deg);transform-origin:center center">552.56</span></div>
<div style="position:absolute;left:-52px;top:455px;width:400px;height:20px;text-align:center;font-size:10.0px;line-height:20px;color:#1a1a1a;white-space:pre;"><span style="display:inline-block;transform:translate(0.50px,0.53px) scaleX(0.7790) rotate(0.03deg);transform-origin:center center">206.84</span></div>
<div style="position:absolute;left:-22px;top:455px;width:400px;height:20px;text-align:center;font-size:10.0px;line-height:20px;color:#1a1a1a;white-space:pre;"><span style="display:inline-block;transform:translate(0.50px,0.53px) scaleX(0.7790) rotate(0.03deg);transform-origin:center center">246.27</span></div>
<div style="position:absolute;left:38px;top:455px;width:400px;height:20px;text-align:center;font-size:10.0px;line-height:20px;color:#1a1a1a;white-space:pre;"><span style="display:inline-block;transform:translate(0.45px,0.53px) scaleX(0.7790) rotate(0.03deg);transform-origin:center center">157.71</span></div>
<div style="position:absolute;left:130px;top:455px;width:400px;height:20px;text-align:center;font-size:10.0px;line-height:20px;color:#1a1a1a;white-space:pre;"><span style="display:inline-block;transform:translate(0.05px,0.53px) scaleX(0.7790) rotate(0.03deg);transform-origin:center center">ÇG-G</span></div>
<div style="position:absolute;left:167px;top:455px;width:400px;height:20px;text-align:center;font-size:10.0px;line-height:20px;color:#1a1a1a;white-space:pre;"><span style="display:inline-block;transform:translate(0.00px,0.53px) scaleX(0.7790) rotate(0.03deg);transform-origin:center center">KD</span></div>
<div style="position:absolute;left:230px;top:455px;width:400px;height:20px;text-align:center;font-size:10.0px;line-height:20px;color:#1a1a1a;white-space:pre;"><span style="display:inline-block;transform:translate(0.05px,0.53px) scaleX(0.7790) rotate(0.03deg);transform-origin:center center">6</span></div>
<div style="position:absolute;left:470px;top:455px;width:400px;height:20px;text-align:center;font-size:10.0px;line-height:20px;color:#1a1a1a;white-space:pre;"><span style="display:inline-block;transform:translate(0.50px,0.53px) scaleX(0.7790) rotate(0.03deg);transform-origin:center center">19.42</span></div>
<div style="position:absolute;left:621px;top:455px;width:400px;height:20px;text-align:center;font-size:10.0px;line-height:20px;color:#1a1a1a;white-space:pre;"><span style="display:inline-block;transform:translate(0.90px,0.53px) scaleX(0.7790) rotate(0.03deg);transform-origin:center center">X</span></div>
<div style="position:absolute;left:657px;top:455px;width:400px;height:20px;text-align:center;font-size:10.0px;line-height:20px;color:#1a1a1a;white-space:pre;"><span style="display:inline-block;transform:translate(0.50px,0.53px) scaleX(0.7790) rotate(0.03deg);transform-origin:center center">6.5U-220</span></div>
<div style="position:absolute;left:705px;top:455px;width:400px;height:20px;text-align:center;font-size:10.0px;line-height:20px;color:#1a1a1a;white-space:pre;"><span style="display:inline-block;transform:translate(0.60px,0.53px) scaleX(0.7790) rotate(0.03deg);transform-origin:center center">2</span></div>
<div style="position:absolute;left:764px;top:455px;width:400px;height:20px;text-align:center;font-size:10.0px;line-height:20px;color:#1a1a1a;white-space:pre;"><span style="display:inline-block;transform:translate(0.30px,0.53px) scaleX(0.7790) rotate(0.03deg);transform-origin:center center">2x1S40/-/1S40</span></div>
<div style="position:absolute;left:203px;top:455px;width:400px;height:20px;text-align:center;font-size:10.0px;line-height:20px;color:#1a1a1a;white-space:pre;"><span style="display:inline-block;transform:translate(0.50px,0.53px) scaleX(0.7790) rotate(0.03deg);transform-origin:center center">KRD2+4</span></div>
<div style="position:absolute;left:-166px;top:480px;width:400px;height:20px;text-align:center;font-size:10.0px;line-height:20px;color:#1a1a1a;white-space:pre;"><span style="display:inline-block;transform:translate(0.90px,0.97px) scaleX(0.7790) rotate(0.03deg);transform-origin:center center">7</span></div>
<div style="position:absolute;left:-130px;top:480px;width:400px;height:20px;text-align:center;font-size:10.0px;line-height:20px;color:#1a1a1a;white-space:pre;"><span style="display:inline-block;transform:translate(0.05px,0.97px) scaleX(0.7790) rotate(0.03deg);transform-origin:center center">669.57</span></div>
<div style="position:absolute;left:-52px;top:480px;width:400px;height:20px;text-align:center;font-size:10.0px;line-height:20px;color:#1a1a1a;white-space:pre;"><span style="display:inline-block;transform:translate(0.50px,0.97px) scaleX(0.7790) rotate(0.03deg);transform-origin:center center">89.21</span></div>
<div style="position:absolute;left:-22px;top:480px;width:400px;height:20px;text-align:center;font-size:10.0px;line-height:20px;color:#1a1a1a;white-space:pre;"><span style="display:inline-block;transform:translate(0.50px,0.97px) scaleX(0.7790) rotate(0.03deg);transform-origin:center center">58.23</span></div>
<div style="position:absolute;left:38px;top:480px;width:400px;height:20px;text-align:center;font-size:10.0px;line-height:20px;color:#1a1a1a;white-space:pre;"><span style="display:inline-block;transform:translate(0.45px,0.97px) scaleX(0.7790) rotate(0.03deg);transform-origin:center center">244.66</span></div>
<div style="position:absolute;left:130px;top:480px;width:400px;height:20px;text-align:center;font-size:10.0px;line-height:20px;color:#1a1a1a;white-space:pre;"><span style="display:inline-block;transform:translate(0.05px,0.97px) scaleX(0.7790) rotate(0.03deg);transform-origin:center center">G-M-G</span></div>
<div style="position:absolute;left:167px;top:480px;width:400px;height:20px;text-align:center;font-size:10.0px;line-height:20px;color:#1a1a1a;white-space:pre;"><span style="display:inline-block;transform:translate(0.00px,0.97px) scaleX(0.7790) rotate(0.03deg);transform-origin:center center">KD</span></div>
<div style="position:absolute;left:230px;top:480px;width:400px;height:20px;text-align:center;font-size:10.0px;line-height:20px;color:#1a1a1a;white-space:pre;"><span style="display:inline-block;transform:translate(0.05px,0.97px) scaleX(0.7790) rotate(0.03deg);transform-origin:center center">7</span></div>
<div style="position:absolute;left:470px;top:480px;width:400px;height:20px;text-align:center;font-size:10.0px;line-height:20px;color:#1a1a1a;white-space:pre;"><span style="display:inline-block;transform:translate(0.50px,0.97px) scaleX(0.7790) rotate(0.03deg);transform-origin:center center">10.2</span></div>
<div style="position:absolute;left:516px;top:480px;width:400px;height:20px;text-align:center;font-size:10.0px;line-height:20px;color:#1a1a1a;white-space:pre;"><span style="display:inline-block;transform:translate(0.00px,0.97px) scaleX(0.8295) rotate(0.03deg);transform-origin:center center">D-DUZ</span></div>
<div style="position:absolute;left:570px;top:480px;width:400px;height:20px;text-align:center;font-size:10.0px;line-height:20px;color:#1a1a1a;white-space:pre;"><span style="display:inline-block;transform:translate(0.95px,0.97px) scaleX(0.8051) rotate(0.03deg);transform-origin:center center">160x160 , Kare Blok</span></div>
<div style="position:absolute;left:621px;top:480px;width:400px;height:20px;text-align:center;font-size:10.0px;line-height:20px;color:#1a1a1a;white-space:pre;"><span style="display:inline-block;transform:translate(0.90px,0.97px) scaleX(0.7790) rotate(0.03deg);transform-origin:center center">X</span></div>
<div style="position:absolute;left:657px;top:480px;width:400px;height:20px;text-align:center;font-size:10.0px;line-height:20px;color:#1a1a1a;white-space:pre;"><span style="display:inline-block;transform:translate(0.50px,0.97px) scaleX(0.7790) rotate(0.03deg);transform-origin:center center">6.5U-220</span></div>
<div style="position:absolute;left:705px;top:480px;width:400px;height:20px;text-align:center;font-size:10.0px;line-height:20px;color:#1a1a1a;white-space:pre;"><span style="display:inline-block;transform:translate(0.60px,0.97px) scaleX(0.7790) rotate(0.03deg);transform-origin:center center">2</span></div>
<div style="position:absolute;left:764px;top:480px;width:400px;height:20px;text-align:center;font-size:10.0px;line-height:20px;color:#1a1a1a;white-space:pre;"><span style="display:inline-block;transform:translate(0.30px,0.97px) scaleX(0.7892) rotate(0.03deg);transform-origin:center center">1S40/1VHD/1S40</span></div>
<div style="position:absolute;left:501px;top:480px;width:400px;height:20px;text-align:left;font-size:10.0px;line-height:20px;color:#1a1a1a;white-space:pre;"><span style="display:inline-block;transform:translate(0.90px,0.97px) scaleX(0.8360) rotate(0.03deg);transform-origin:left center">D -250</span></div>
<div style="position:absolute;left:203px;top:475px;width:400px;height:20px;text-align:center;font-size:10.0px;line-height:20px;color:#1a1a1a;white-space:pre;"><span style="display:inline-block;transform:translate(0.50px,0.07px) scaleX(0.7790) rotate(0.03deg);transform-origin:center center">Z-12</span></div>
<div style="position:absolute;left:203px;top:486px;width:400px;height:20px;text-align:center;font-size:10.0px;line-height:20px;color:#1a1a1a;white-space:pre;"><span style="display:inline-block;transform:translate(0.50px,0.87px) scaleX(0.7790) rotate(0.03deg);transform-origin:center center">(3 AWG)</span></div>
<div style="position:absolute;left:-166px;top:506px;width:400px;height:20px;text-align:center;font-size:10.0px;line-height:20px;color:#1a1a1a;white-space:pre;"><span style="display:inline-block;transform:translate(0.90px,0.41px) scaleX(0.7790) rotate(0.03deg);transform-origin:center center">8</span></div>
<div style="position:absolute;left:-130px;top:506px;width:400px;height:20px;text-align:center;font-size:10.0px;line-height:20px;color:#1a1a1a;white-space:pre;"><span style="display:inline-block;transform:translate(0.05px,0.41px) scaleX(0.7790) rotate(0.03deg);transform-origin:center center">730.97</span></div>
<div style="position:absolute;left:-52px;top:506px;width:400px;height:20px;text-align:center;font-size:10.0px;line-height:20px;color:#1a1a1a;white-space:pre;"><span style="display:inline-block;transform:translate(0.50px,0.41px) scaleX(0.7790) rotate(0.03deg);transform-origin:center center">81.99</span></div>
<div style="position:absolute;left:-22px;top:506px;width:400px;height:20px;text-align:center;font-size:10.0px;line-height:20px;color:#1a1a1a;white-space:pre;"><span style="display:inline-block;transform:translate(0.50px,0.41px) scaleX(0.7790) rotate(0.03deg);transform-origin:center center">65.60</span></div>
<div style="position:absolute;left:38px;top:506px;width:400px;height:20px;text-align:center;font-size:10.0px;line-height:20px;color:#1a1a1a;white-space:pre;"><span style="display:inline-block;transform:translate(0.45px,0.41px) scaleX(0.7790) rotate(0.03deg);transform-origin:center center">227.63</span></div>
<div style="position:absolute;left:130px;top:506px;width:400px;height:20px;text-align:center;font-size:10.0px;line-height:20px;color:#1a1a1a;white-space:pre;"><span style="display:inline-block;transform:translate(0.05px,0.41px) scaleX(0.7790) rotate(0.03deg);transform-origin:center center">G-M-G</span></div>
<div style="position:absolute;left:167px;top:506px;width:400px;height:20px;text-align:center;font-size:10.0px;line-height:20px;color:#1a1a1a;white-space:pre;"><span style="display:inline-block;transform:translate(0.00px,0.41px) scaleX(0.7790) rotate(0.03deg);transform-origin:center center">KD</span></div>
<div style="position:absolute;left:230px;top:506px;width:400px;height:20px;text-align:center;font-size:10.0px;line-height:20px;color:#1a1a1a;white-space:pre;"><span style="display:inline-block;transform:translate(0.05px,0.41px) scaleX(0.7790) rotate(0.03deg);transform-origin:center center">8</span></div>
<div style="position:absolute;left:470px;top:506px;width:400px;height:20px;text-align:center;font-size:10.0px;line-height:20px;color:#1a1a1a;white-space:pre;"><span style="display:inline-block;transform:translate(0.50px,0.41px) scaleX(0.7790) rotate(0.03deg);transform-origin:center center">10.2</span></div>
<div style="position:absolute;left:516px;top:506px;width:400px;height:20px;text-align:center;font-size:10.0px;line-height:20px;color:#1a1a1a;white-space:pre;"><span style="display:inline-block;transform:translate(0.00px,0.41px) scaleX(0.8295) rotate(0.03deg);transform-origin:center center">D-DUZ</span></div>
<div style="position:absolute;left:570px;top:506px;width:400px;height:20px;text-align:center;font-size:10.0px;line-height:20px;color:#1a1a1a;white-space:pre;"><span style="display:inline-block;transform:translate(0.95px,0.41px) scaleX(0.8051) rotate(0.03deg);transform-origin:center center">160x160 , Kare Blok</span></div>
<div style="position:absolute;left:621px;top:506px;width:400px;height:20px;text-align:center;font-size:10.0px;line-height:20px;color:#1a1a1a;white-space:pre;"><span style="display:inline-block;transform:translate(0.90px,0.41px) scaleX(0.7790) rotate(0.03deg);transform-origin:center center">X</span></div>
<div style="position:absolute;left:705px;top:506px;width:400px;height:20px;text-align:center;font-size:10.0px;line-height:20px;color:#1a1a1a;white-space:pre;"><span style="display:inline-block;transform:translate(0.60px,0.41px) scaleX(0.7790) rotate(0.03deg);transform-origin:center center">2</span></div>
<div style="position:absolute;left:764px;top:506px;width:400px;height:20px;text-align:center;font-size:10.0px;line-height:20px;color:#1a1a1a;white-space:pre;"><span style="display:inline-block;transform:translate(0.30px,0.41px) scaleX(0.7892) rotate(0.03deg);transform-origin:center center">1S40/1VHD/1S40</span></div>
<div style="position:absolute;left:501px;top:506px;width:400px;height:20px;text-align:left;font-size:10.0px;line-height:20px;color:#1a1a1a;white-space:pre;"><span style="display:inline-block;transform:translate(0.90px,0.41px) scaleX(0.8360) rotate(0.03deg);transform-origin:left center">D -250</span></div>
<div style="position:absolute;left:203px;top:500px;width:400px;height:20px;text-align:center;font-size:10.0px;line-height:20px;color:#1a1a1a;white-space:pre;"><span style="display:inline-block;transform:translate(0.50px,0.51px) scaleX(0.7790) rotate(0.03deg);transform-origin:center center">Z-12</span></div>
<div style="position:absolute;left:203px;top:512px;width:400px;height:20px;text-align:center;font-size:10.0px;line-height:20px;color:#1a1a1a;white-space:pre;"><span style="display:inline-block;transform:translate(0.50px,0.31px) scaleX(0.7790) rotate(0.03deg);transform-origin:center center">(3 AWG)</span></div>
<div style="position:absolute;left:-166px;top:531px;width:400px;height:20px;text-align:center;font-size:10.0px;line-height:20px;color:#1a1a1a;white-space:pre;"><span style="display:inline-block;transform:translate(0.90px,0.85px) scaleX(0.7790) rotate(0.03deg);transform-origin:center center">9</span></div>
<div style="position:absolute;left:-130px;top:531px;width:400px;height:20px;text-align:center;font-size:10.0px;line-height:20px;color:#1a1a1a;white-space:pre;"><span style="display:inline-block;transform:translate(0.05px,0.85px) scaleX(0.7790) rotate(0.03deg);transform-origin:center center">833.54</span></div>
<div style="position:absolute;left:-52px;top:531px;width:400px;height:20px;text-align:center;font-size:10.0px;line-height:20px;color:#1a1a1a;white-space:pre;"><span style="display:inline-block;transform:translate(0.50px,0.85px) scaleX(0.7790) rotate(0.03deg);transform-origin:center center">106.07</span></div>
<div style="position:absolute;left:-22px;top:531px;width:400px;height:20px;text-align:center;font-size:10.0px;line-height:20px;color:#1a1a1a;white-space:pre;"><span style="display:inline-block;transform:translate(0.50px,0.85px) scaleX(0.7790) rotate(0.03deg);transform-origin:center center">113.93</span></div>
<div style="position:absolute;left:38px;top:531px;width:400px;height:20px;text-align:center;font-size:10.0px;line-height:20px;color:#1a1a1a;white-space:pre;"><span style="display:inline-block;transform:translate(0.45px,0.85px) scaleX(0.7790) rotate(0.03deg);transform-origin:center center">247.80</span></div>
<div style="position:absolute;left:130px;top:531px;width:400px;height:20px;text-align:center;font-size:10.0px;line-height:20px;color:#1a1a1a;white-space:pre;"><span style="display:inline-block;transform:translate(0.05px,0.85px) scaleX(0.7790) rotate(0.03deg);transform-origin:center center">G-M-G</span></div>
<div style="position:absolute;left:167px;top:531px;width:400px;height:20px;text-align:center;font-size:10.0px;line-height:20px;color:#1a1a1a;white-space:pre;"><span style="display:inline-block;transform:translate(0.00px,0.85px) scaleX(0.7790) rotate(0.03deg);transform-origin:center center">KD</span></div>
<div style="position:absolute;left:230px;top:531px;width:400px;height:20px;text-align:center;font-size:10.0px;line-height:20px;color:#1a1a1a;white-space:pre;"><span style="display:inline-block;transform:translate(0.05px,0.85px) scaleX(0.7790) rotate(0.03deg);transform-origin:center center">9</span></div>
<div style="position:absolute;left:470px;top:531px;width:400px;height:20px;text-align:center;font-size:10.0px;line-height:20px;color:#1a1a1a;white-space:pre;"><span style="display:inline-block;transform:translate(0.50px,0.85px) scaleX(0.7790) rotate(0.03deg);transform-origin:center center">10.2</span></div>
<div style="position:absolute;left:516px;top:531px;width:400px;height:20px;text-align:center;font-size:10.0px;line-height:20px;color:#1a1a1a;white-space:pre;"><span style="display:inline-block;transform:translate(0.00px,0.85px) scaleX(0.8295) rotate(0.03deg);transform-origin:center center">D-DUZ</span></div>
<div style="position:absolute;left:570px;top:531px;width:400px;height:20px;text-align:center;font-size:10.0px;line-height:20px;color:#1a1a1a;white-space:pre;"><span style="display:inline-block;transform:translate(0.95px,0.85px) scaleX(0.8051) rotate(0.03deg);transform-origin:center center">160x160 , Kare Blok</span></div>
<div style="position:absolute;left:621px;top:531px;width:400px;height:20px;text-align:center;font-size:10.0px;line-height:20px;color:#1a1a1a;white-space:pre;"><span style="display:inline-block;transform:translate(0.90px,0.85px) scaleX(0.7790) rotate(0.03deg);transform-origin:center center">X</span></div>
<div style="position:absolute;left:705px;top:531px;width:400px;height:20px;text-align:center;font-size:10.0px;line-height:20px;color:#1a1a1a;white-space:pre;"><span style="display:inline-block;transform:translate(0.60px,0.85px) scaleX(0.7790) rotate(0.03deg);transform-origin:center center">2</span></div>
<div style="position:absolute;left:764px;top:531px;width:400px;height:20px;text-align:center;font-size:10.0px;line-height:20px;color:#1a1a1a;white-space:pre;"><span style="display:inline-block;transform:translate(0.30px,0.85px) scaleX(0.7892) rotate(0.03deg);transform-origin:center center">1S40/1VHD/1S40</span></div>
<div style="position:absolute;left:501px;top:531px;width:400px;height:20px;text-align:left;font-size:10.0px;line-height:20px;color:#1a1a1a;white-space:pre;"><span style="display:inline-block;transform:translate(0.90px,0.85px) scaleX(0.8360) rotate(0.03deg);transform-origin:left center">D -250</span></div>
<div style="position:absolute;left:203px;top:525px;width:400px;height:20px;text-align:center;font-size:10.0px;line-height:20px;color:#1a1a1a;white-space:pre;"><span style="display:inline-block;transform:translate(0.50px,0.95px) scaleX(0.7790) rotate(0.03deg);transform-origin:center center">Z-12</span></div>
<div style="position:absolute;left:203px;top:537px;width:400px;height:20px;text-align:center;font-size:10.0px;line-height:20px;color:#1a1a1a;white-space:pre;"><span style="display:inline-block;transform:translate(0.50px,0.75px) scaleX(0.7790) rotate(0.03deg);transform-origin:center center">(3 AWG)</span></div>
<div style="position:absolute;left:-166px;top:557px;width:400px;height:20px;text-align:center;font-size:10.0px;line-height:20px;color:#1a1a1a;white-space:pre;"><span style="display:inline-block;transform:translate(0.90px,0.29px) scaleX(0.7790) rotate(0.03deg);transform-origin:center center">10</span></div>
<div style="position:absolute;left:-130px;top:557px;width:400px;height:20px;text-align:center;font-size:10.0px;line-height:20px;color:#1a1a1a;white-space:pre;"><span style="display:inline-block;transform:translate(0.05px,0.29px) scaleX(0.7790) rotate(0.03deg);transform-origin:center center">943.11</span></div>
<div style="position:absolute;left:-52px;top:557px;width:400px;height:20px;text-align:center;font-size:10.0px;line-height:20px;color:#1a1a1a;white-space:pre;"><span style="display:inline-block;transform:translate(0.50px,0.29px) scaleX(0.7790) rotate(0.03deg);transform-origin:center center">97.14</span></div>
<div style="position:absolute;left:-22px;top:557px;width:400px;height:20px;text-align:center;font-size:10.0px;line-height:20px;color:#1a1a1a;white-space:pre;"><span style="display:inline-block;transform:translate(0.50px,0.29px) scaleX(0.7790) rotate(0.03deg);transform-origin:center center">100.80</span></div>
<div style="position:absolute;left:130px;top:557px;width:400px;height:20px;text-align:center;font-size:10.0px;line-height:20px;color:#1a1a1a;white-space:pre;"><span style="display:inline-block;transform:translate(0.05px,0.29px) scaleX(0.7790) rotate(0.03deg);transform-origin:center center">M</span></div>
<div style="position:absolute;left:167px;top:557px;width:400px;height:20px;text-align:center;font-size:10.0px;line-height:20px;color:#1a1a1a;white-space:pre;"><span style="display:inline-block;transform:translate(0.00px,0.29px) scaleX(0.7790) rotate(0.03deg);transform-origin:center center">T</span></div>
<div style="position:absolute;left:230px;top:557px;width:400px;height:20px;text-align:center;font-size:10.0px;line-height:20px;color:#1a1a1a;white-space:pre;"><span style="display:inline-block;transform:translate(0.05px,0.29px) scaleX(0.7790) rotate(0.03deg);transform-origin:center center">10</span></div>
<div style="position:absolute;left:470px;top:557px;width:400px;height:20px;text-align:center;font-size:10.0px;line-height:20px;color:#1a1a1a;white-space:pre;"><span style="display:inline-block;transform:translate(0.50px,0.29px) scaleX(0.7790) rotate(0.03deg);transform-origin:center center">10.75</span></div>
<div style="position:absolute;left:516px;top:557px;width:400px;height:20px;text-align:center;font-size:10.0px;line-height:20px;color:#1a1a1a;white-space:pre;"><span style="display:inline-block;transform:translate(0.00px,0.29px) scaleX(0.8628) rotate(0.03deg);transform-origin:center center">T-DUZ</span></div>
<div style="position:absolute;left:570px;top:557px;width:400px;height:20px;text-align:center;font-size:10.0px;line-height:20px;color:#1a1a1a;white-space:pre;"><span style="display:inline-block;transform:translate(0.95px,0.29px) scaleX(0.7790) rotate(0.03deg);transform-origin:center center">80x80 , Kare Blok</span></div>
<div style="position:absolute;left:705px;top:557px;width:400px;height:20px;text-align:center;font-size:10.0px;line-height:20px;color:#1a1a1a;white-space:pre;"><span style="display:inline-block;transform:translate(0.60px,0.29px) scaleX(0.7790) rotate(0.03deg);transform-origin:center center">2</span></div>
<div style="position:absolute;left:764px;top:557px;width:400px;height:20px;text-align:center;font-size:10.0px;line-height:20px;color:#1a1a1a;white-space:pre;"><span style="display:inline-block;transform:translate(0.30px,0.29px) scaleX(0.7790) rotate(0.03deg);transform-origin:center center">-/1VHD/-</span></div>
<div style="position:absolute;left:501px;top:557px;width:400px;height:20px;text-align:left;font-size:10.0px;line-height:20px;color:#1a1a1a;white-space:pre;"><span style="display:inline-block;transform:translate(0.90px,0.29px) scaleX(0.8360) rotate(0.03deg);transform-origin:left center">T -250</span></div>
<div style="position:absolute;left:203px;top:551px;width:400px;height:20px;text-align:center;font-size:10.0px;line-height:20px;color:#1a1a1a;white-space:pre;"><span style="display:inline-block;transform:translate(0.50px,0.39px) scaleX(0.7790) rotate(0.03deg);transform-origin:center center">T-12</span></div>
<div style="position:absolute;left:203px;top:563px;width:400px;height:20px;text-align:center;font-size:10.0px;line-height:20px;color:#1a1a1a;white-space:pre;"><span style="display:inline-block;transform:translate(0.50px,0.19px) scaleX(0.7790) rotate(0.03deg);transform-origin:center center">(3 AWG)</span></div>
<div style="position:absolute;left:-166px;top:582px;width:400px;height:20px;text-align:center;font-size:10.0px;line-height:20px;color:#1a1a1a;white-space:pre;"><span style="display:inline-block;transform:translate(0.90px,0.73px) scaleX(0.7790) rotate(0.03deg);transform-origin:center center">11</span></div>
<div style="position:absolute;left:-130px;top:582px;width:400px;height:20px;text-align:center;font-size:10.0px;line-height:20px;color:#1a1a1a;white-space:pre;"><span style="display:inline-block;transform:translate(0.05px,0.73px) scaleX(0.7790) rotate(0.03deg);transform-origin:center center">1027.82</span></div>
<div style="position:absolute;left:-52px;top:582px;width:400px;height:20px;text-align:center;font-size:10.0px;line-height:20px;color:#1a1a1a;white-space:pre;"><span style="display:inline-block;transform:translate(0.50px,0.73px) scaleX(0.7790) rotate(0.03deg);transform-origin:center center">81.90</span></div>
<div style="position:absolute;left:-22px;top:582px;width:400px;height:20px;text-align:center;font-size:10.0px;line-height:20px;color:#1a1a1a;white-space:pre;"><span style="display:inline-block;transform:translate(0.50px,0.73px) scaleX(0.7790) rotate(0.03deg);transform-origin:center center">54.66</span></div>
<div style="position:absolute;left:38px;top:582px;width:400px;height:20px;text-align:center;font-size:10.0px;line-height:20px;color:#1a1a1a;white-space:pre;"><span style="display:inline-block;transform:translate(0.45px,0.73px) scaleX(0.7790) rotate(0.03deg);transform-origin:center center">135.12</span></div>
<div style="position:absolute;left:130px;top:582px;width:400px;height:20px;text-align:center;font-size:10.0px;line-height:20px;color:#1a1a1a;white-space:pre;"><span style="display:inline-block;transform:translate(0.05px,0.73px) scaleX(0.7790) rotate(0.03deg);transform-origin:center center">G-M-G</span></div>
<div style="position:absolute;left:167px;top:582px;width:400px;height:20px;text-align:center;font-size:10.0px;line-height:20px;color:#1a1a1a;white-space:pre;"><span style="display:inline-block;transform:translate(0.00px,0.73px) scaleX(0.7790) rotate(0.03deg);transform-origin:center center">KD</span></div>
<div style="position:absolute;left:230px;top:582px;width:400px;height:20px;text-align:center;font-size:10.0px;line-height:20px;color:#1a1a1a;white-space:pre;"><span style="display:inline-block;transform:translate(0.05px,0.73px) scaleX(0.7790) rotate(0.03deg);transform-origin:center center">11</span></div>
<div style="position:absolute;left:470px;top:582px;width:400px;height:20px;text-align:center;font-size:10.0px;line-height:20px;color:#1a1a1a;white-space:pre;"><span style="display:inline-block;transform:translate(0.50px,0.73px) scaleX(0.7790) rotate(0.03deg);transform-origin:center center">10.2</span></div>
<div style="position:absolute;left:516px;top:582px;width:400px;height:20px;text-align:center;font-size:10.0px;line-height:20px;color:#1a1a1a;white-space:pre;"><span style="display:inline-block;transform:translate(0.00px,0.73px) scaleX(0.8295) rotate(0.03deg);transform-origin:center center">D-DUZ</span></div>
<div style="position:absolute;left:570px;top:582px;width:400px;height:20px;text-align:center;font-size:10.0px;line-height:20px;color:#1a1a1a;white-space:pre;"><span style="display:inline-block;transform:translate(0.95px,0.73px) scaleX(0.8051) rotate(0.03deg);transform-origin:center center">160x160 , Kare Blok</span></div>
<div style="position:absolute;left:621px;top:582px;width:400px;height:20px;text-align:center;font-size:10.0px;line-height:20px;color:#1a1a1a;white-space:pre;"><span style="display:inline-block;transform:translate(0.90px,0.73px) scaleX(0.7790) rotate(0.03deg);transform-origin:center center">X</span></div>
<div style="position:absolute;left:705px;top:582px;width:400px;height:20px;text-align:center;font-size:10.0px;line-height:20px;color:#1a1a1a;white-space:pre;"><span style="display:inline-block;transform:translate(0.60px,0.73px) scaleX(0.7790) rotate(0.03deg);transform-origin:center center">2</span></div>
<div style="position:absolute;left:764px;top:582px;width:400px;height:20px;text-align:center;font-size:10.0px;line-height:20px;color:#1a1a1a;white-space:pre;"><span style="display:inline-block;transform:translate(0.30px,0.73px) scaleX(0.7892) rotate(0.03deg);transform-origin:center center">1S40/1VHD/1S40</span></div>
<div style="position:absolute;left:501px;top:582px;width:400px;height:20px;text-align:left;font-size:10.0px;line-height:20px;color:#1a1a1a;white-space:pre;"><span style="display:inline-block;transform:translate(0.90px,0.73px) scaleX(0.8360) rotate(0.03deg);transform-origin:left center">D -250</span></div>
<div style="position:absolute;left:203px;top:576px;width:400px;height:20px;text-align:center;font-size:10.0px;line-height:20px;color:#1a1a1a;white-space:pre;"><span style="display:inline-block;transform:translate(0.50px,0.83px) scaleX(0.7790) rotate(0.03deg);transform-origin:center center">Z-12</span></div>
<div style="position:absolute;left:203px;top:588px;width:400px;height:20px;text-align:center;font-size:10.0px;line-height:20px;color:#1a1a1a;white-space:pre;"><span style="display:inline-block;transform:translate(0.50px,0.63px) scaleX(0.7790) rotate(0.03deg);transform-origin:center center">(3 AWG)</span></div>
<div style="position:absolute;left:-166px;top:608px;width:400px;height:20px;text-align:center;font-size:10.0px;line-height:20px;color:#1a1a1a;white-space:pre;"><span style="display:inline-block;transform:translate(0.90px,0.17px) scaleX(0.7790) rotate(0.03deg);transform-origin:center center">12</span></div>
<div style="position:absolute;left:-130px;top:608px;width:400px;height:20px;text-align:center;font-size:10.0px;line-height:20px;color:#1a1a1a;white-space:pre;"><span style="display:inline-block;transform:translate(0.05px,0.17px) scaleX(0.7790) rotate(0.03deg);transform-origin:center center">1106.90</span></div>
<div style="position:absolute;left:-52px;top:608px;width:400px;height:20px;text-align:center;font-size:10.0px;line-height:20px;color:#1a1a1a;white-space:pre;"><span style="display:inline-block;transform:translate(0.50px,0.17px) scaleX(0.7790) rotate(0.03deg);transform-origin:center center">117.50</span></div>
<div style="position:absolute;left:-22px;top:608px;width:400px;height:20px;text-align:center;font-size:10.0px;line-height:20px;color:#1a1a1a;white-space:pre;"><span style="display:inline-block;transform:translate(0.50px,0.17px) scaleX(0.7790) rotate(0.03deg);transform-origin:center center">139.01</span></div>
<div style="position:absolute;left:38px;top:608px;width:400px;height:20px;text-align:center;font-size:10.0px;line-height:20px;color:#1a1a1a;white-space:pre;"><span style="display:inline-block;transform:translate(0.45px,0.17px) scaleX(0.7790) rotate(0.03deg);transform-origin:center center">163.05</span></div>
<div style="position:absolute;left:130px;top:608px;width:400px;height:20px;text-align:center;font-size:10.0px;line-height:20px;color:#1a1a1a;white-space:pre;"><span style="display:inline-block;transform:translate(0.05px,0.17px) scaleX(0.7790) rotate(0.03deg);transform-origin:center center">G-M-G</span></div>
<div style="position:absolute;left:167px;top:608px;width:400px;height:20px;text-align:center;font-size:10.0px;line-height:20px;color:#1a1a1a;white-space:pre;"><span style="display:inline-block;transform:translate(0.00px,0.17px) scaleX(0.7790) rotate(0.03deg);transform-origin:center center">KD</span></div>
<div style="position:absolute;left:230px;top:608px;width:400px;height:20px;text-align:center;font-size:10.0px;line-height:20px;color:#1a1a1a;white-space:pre;"><span style="display:inline-block;transform:translate(0.05px,0.17px) scaleX(0.7790) rotate(0.03deg);transform-origin:center center">12</span></div>
<div style="position:absolute;left:470px;top:608px;width:400px;height:20px;text-align:center;font-size:10.0px;line-height:20px;color:#1a1a1a;white-space:pre;"><span style="display:inline-block;transform:translate(0.50px,0.17px) scaleX(0.7790) rotate(0.03deg);transform-origin:center center">12.2</span></div>
<div style="position:absolute;left:516px;top:608px;width:400px;height:20px;text-align:center;font-size:10.0px;line-height:20px;color:#1a1a1a;white-space:pre;"><span style="display:inline-block;transform:translate(0.00px,0.17px) scaleX(0.8295) rotate(0.03deg);transform-origin:center center">D-DUZ</span></div>
<div style="position:absolute;left:570px;top:608px;width:400px;height:20px;text-align:center;font-size:10.0px;line-height:20px;color:#1a1a1a;white-space:pre;"><span style="display:inline-block;transform:translate(0.95px,0.17px) scaleX(0.8051) rotate(0.03deg);transform-origin:center center">170x170 , Kare Blok</span></div>
<div style="position:absolute;left:621px;top:608px;width:400px;height:20px;text-align:center;font-size:10.0px;line-height:20px;color:#1a1a1a;white-space:pre;"><span style="display:inline-block;transform:translate(0.90px,0.17px) scaleX(0.7790) rotate(0.03deg);transform-origin:center center">X</span></div>
<div style="position:absolute;left:705px;top:608px;width:400px;height:20px;text-align:center;font-size:10.0px;line-height:20px;color:#1a1a1a;white-space:pre;"><span style="display:inline-block;transform:translate(0.60px,0.17px) scaleX(0.7790) rotate(0.03deg);transform-origin:center center">2</span></div>
<div style="position:absolute;left:764px;top:608px;width:400px;height:20px;text-align:center;font-size:10.0px;line-height:20px;color:#1a1a1a;white-space:pre;"><span style="display:inline-block;transform:translate(0.30px,0.17px) scaleX(0.7892) rotate(0.03deg);transform-origin:center center">1S40/1VHD/1S40</span></div>
<div style="position:absolute;left:501px;top:608px;width:400px;height:20px;text-align:left;font-size:10.0px;line-height:20px;color:#1a1a1a;white-space:pre;"><span style="display:inline-block;transform:translate(0.90px,0.17px) scaleX(0.8360) rotate(0.03deg);transform-origin:left center">D -350</span></div>
<div style="position:absolute;left:203px;top:602px;width:400px;height:20px;text-align:center;font-size:10.0px;line-height:20px;color:#1a1a1a;white-space:pre;"><span style="display:inline-block;transform:translate(0.50px,0.27px) scaleX(0.7790) rotate(0.03deg);transform-origin:center center">Z-14</span></div>
<div style="position:absolute;left:203px;top:614px;width:400px;height:20px;text-align:center;font-size:10.0px;line-height:20px;color:#1a1a1a;white-space:pre;"><span style="display:inline-block;transform:translate(0.50px,0.07px) scaleX(0.7790) rotate(0.03deg);transform-origin:center center">(3 AWG)</span></div>
<div style="position:absolute;left:-166px;top:633px;width:400px;height:20px;text-align:center;font-size:10.0px;line-height:20px;color:#1a1a1a;white-space:pre;"><span style="display:inline-block;transform:translate(0.90px,0.61px) scaleX(0.7790) rotate(0.03deg);transform-origin:center center">13</span></div>
<div style="position:absolute;left:-130px;top:633px;width:400px;height:20px;text-align:center;font-size:10.0px;line-height:20px;color:#1a1a1a;white-space:pre;"><span style="display:inline-block;transform:translate(0.05px,0.61px) scaleX(0.7790) rotate(0.03deg);transform-origin:center center">1262.83</span></div>
<div style="position:absolute;left:-52px;top:633px;width:400px;height:20px;text-align:center;font-size:10.0px;line-height:20px;color:#1a1a1a;white-space:pre;"><span style="display:inline-block;transform:translate(0.50px,0.61px) scaleX(0.7790) rotate(0.03deg);transform-origin:center center">143.99</span></div>
<div style="position:absolute;left:-22px;top:633px;width:400px;height:20px;text-align:center;font-size:10.0px;line-height:20px;color:#1a1a1a;white-space:pre;"><span style="display:inline-block;transform:translate(0.50px,0.61px) scaleX(0.7790) rotate(0.03deg);transform-origin:center center">155.48</span></div>
<div style="position:absolute;left:130px;top:633px;width:400px;height:20px;text-align:center;font-size:10.0px;line-height:20px;color:#1a1a1a;white-space:pre;"><span style="display:inline-block;transform:translate(0.05px,0.61px) scaleX(0.7790) rotate(0.03deg);transform-origin:center center">M</span></div>
<div style="position:absolute;left:167px;top:633px;width:400px;height:20px;text-align:center;font-size:10.0px;line-height:20px;color:#1a1a1a;white-space:pre;"><span style="display:inline-block;transform:translate(0.00px,0.61px) scaleX(0.7790) rotate(0.03deg);transform-origin:center center">T</span></div>
<div style="position:absolute;left:230px;top:633px;width:400px;height:20px;text-align:center;font-size:10.0px;line-height:20px;color:#1a1a1a;white-space:pre;"><span style="display:inline-block;transform:translate(0.05px,0.61px) scaleX(0.7790) rotate(0.03deg);transform-origin:center center">13</span></div>
<div style="position:absolute;left:470px;top:633px;width:400px;height:20px;text-align:center;font-size:10.0px;line-height:20px;color:#1a1a1a;white-space:pre;"><span style="display:inline-block;transform:translate(0.50px,0.61px) scaleX(0.7790) rotate(0.03deg);transform-origin:center center">10.75</span></div>
<div style="position:absolute;left:516px;top:633px;width:400px;height:20px;text-align:center;font-size:10.0px;line-height:20px;color:#1a1a1a;white-space:pre;"><span style="display:inline-block;transform:translate(0.00px,0.61px) scaleX(0.8628) rotate(0.03deg);transform-origin:center center">T-DUZ</span></div>
<div style="position:absolute;left:570px;top:633px;width:400px;height:20px;text-align:center;font-size:10.0px;line-height:20px;color:#1a1a1a;white-space:pre;"><span style="display:inline-block;transform:translate(0.95px,0.61px) scaleX(0.8073) rotate(0.03deg);transform-origin:center center">110x110 , Kare Blok</span></div>
<div style="position:absolute;left:705px;top:633px;width:400px;height:20px;text-align:center;font-size:10.0px;line-height:20px;color:#1a1a1a;white-space:pre;"><span style="display:inline-block;transform:translate(0.60px,0.61px) scaleX(0.7790) rotate(0.03deg);transform-origin:center center">2</span></div>
<div style="position:absolute;left:764px;top:633px;width:400px;height:20px;text-align:center;font-size:10.0px;line-height:20px;color:#1a1a1a;white-space:pre;"><span style="display:inline-block;transform:translate(0.30px,0.61px) scaleX(0.7790) rotate(0.03deg);transform-origin:center center">-/1VHD/-</span></div>
<div style="position:absolute;left:501px;top:633px;width:400px;height:20px;text-align:left;font-size:10.0px;line-height:20px;color:#1a1a1a;white-space:pre;"><span style="display:inline-block;transform:translate(0.90px,0.61px) scaleX(0.8360) rotate(0.03deg);transform-origin:left center">T -350</span></div>
<div style="position:absolute;left:203px;top:627px;width:400px;height:20px;text-align:center;font-size:10.0px;line-height:20px;color:#1a1a1a;white-space:pre;"><span style="display:inline-block;transform:translate(0.50px,0.71px) scaleX(0.7790) rotate(0.03deg);transform-origin:center center">T-14</span></div>
<div style="position:absolute;left:203px;top:639px;width:400px;height:20px;text-align:center;font-size:10.0px;line-height:20px;color:#1a1a1a;white-space:pre;"><span style="display:inline-block;transform:translate(0.50px,0.51px) scaleX(0.7790) rotate(0.03deg);transform-origin:center center">(3 AWG)</span></div>
<div style="position:absolute;left:-89px;top:341px;width:400px;height:20px;text-align:center;font-size:10.0px;line-height:20px;color:#1a1a1a;white-space:pre;"><span style="display:inline-block;transform:translate(0.55px,0.05px) scaleX(0.7790) rotate(0.03deg);transform-origin:center center">55.72</span></div>
<div style="position:absolute;left:8px;top:341px;width:400px;height:20px;text-align:center;font-size:10.0px;line-height:20px;color:#1a1a1a;white-space:pre;"><span style="display:inline-block;transform:translate(0.50px,0.05px) scaleX(0.7790) rotate(0.03deg);transform-origin:center center">55.72</span></div>
<div style="position:absolute;left:-89px;top:366px;width:400px;height:20px;text-align:center;font-size:10.0px;line-height:20px;color:#1a1a1a;white-space:pre;"><span style="display:inline-block;transform:translate(0.55px,0.49px) scaleX(0.7790) rotate(0.03deg);transform-origin:center center">63.62</span></div>
<div style="position:absolute;left:8px;top:366px;width:400px;height:20px;text-align:center;font-size:10.0px;line-height:20px;color:#1a1a1a;white-space:pre;"><span style="display:inline-block;transform:translate(0.50px,0.49px) scaleX(0.7790) rotate(0.03deg);transform-origin:center center">63.62</span></div>
<div style="position:absolute;left:-89px;top:391px;width:400px;height:20px;text-align:center;font-size:10.0px;line-height:20px;color:#1a1a1a;white-space:pre;"><span style="display:inline-block;transform:translate(0.55px,0.93px) scaleX(0.7790) rotate(0.03deg);transform-origin:center center">56.30</span></div>
<div style="position:absolute;left:8px;top:391px;width:400px;height:20px;text-align:center;font-size:10.0px;line-height:20px;color:#1a1a1a;white-space:pre;"><span style="display:inline-block;transform:translate(0.50px,0.93px) scaleX(0.7790) rotate(0.03deg);transform-origin:center center">56.30</span></div>
<div style="position:absolute;left:-89px;top:417px;width:400px;height:20px;text-align:center;font-size:10.0px;line-height:20px;color:#1a1a1a;white-space:pre;"><span style="display:inline-block;transform:translate(0.55px,0.37px) scaleX(0.7790) rotate(0.03deg);transform-origin:center center">80.25</span></div>
<div style="position:absolute;left:8px;top:417px;width:400px;height:20px;text-align:center;font-size:10.0px;line-height:20px;color:#1a1a1a;white-space:pre;"><span style="display:inline-block;transform:translate(0.50px,0.37px) scaleX(0.7790) rotate(0.03deg);transform-origin:center center">80.25</span></div>
<div style="position:absolute;left:-89px;top:442px;width:400px;height:20px;text-align:center;font-size:10.0px;line-height:20px;color:#1a1a1a;white-space:pre;"><span style="display:inline-block;transform:translate(0.55px,0.81px) scaleX(0.7790) rotate(0.03deg);transform-origin:center center">296.67</span></div>
<div style="position:absolute;left:8px;top:442px;width:400px;height:20px;text-align:center;font-size:10.0px;line-height:20px;color:#1a1a1a;white-space:pre;"><span style="display:inline-block;transform:translate(0.50px,0.81px) scaleX(0.7790) rotate(0.03deg);transform-origin:center center">296.67</span></div>
<div style="position:absolute;left:-89px;top:468px;width:400px;height:20px;text-align:center;font-size:10.0px;line-height:20px;color:#1a1a1a;white-space:pre;"><span style="display:inline-block;transform:translate(0.55px,0.25px) scaleX(0.7790) rotate(0.03deg);transform-origin:center center">117.01</span></div>
<div style="position:absolute;left:8px;top:468px;width:400px;height:20px;text-align:center;font-size:10.0px;line-height:20px;color:#1a1a1a;white-space:pre;"><span style="display:inline-block;transform:translate(0.50px,0.25px) scaleX(0.7790) rotate(0.03deg);transform-origin:center center">117.01</span></div>
<div style="position:absolute;left:-89px;top:493px;width:400px;height:20px;text-align:center;font-size:10.0px;line-height:20px;color:#1a1a1a;white-space:pre;"><span style="display:inline-block;transform:translate(0.55px,0.69px) scaleX(0.7790) rotate(0.03deg);transform-origin:center center">61.41</span></div>
<div style="position:absolute;left:8px;top:493px;width:400px;height:20px;text-align:center;font-size:10.0px;line-height:20px;color:#1a1a1a;white-space:pre;"><span style="display:inline-block;transform:translate(0.50px,0.69px) scaleX(0.7790) rotate(0.03deg);transform-origin:center center">61.41</span></div>
<div style="position:absolute;left:-89px;top:519px;width:400px;height:20px;text-align:center;font-size:10.0px;line-height:20px;color:#1a1a1a;white-space:pre;"><span style="display:inline-block;transform:translate(0.55px,0.13px) scaleX(0.7790) rotate(0.03deg);transform-origin:center center">102.57</span></div>
<div style="position:absolute;left:8px;top:519px;width:400px;height:20px;text-align:center;font-size:10.0px;line-height:20px;color:#1a1a1a;white-space:pre;"><span style="display:inline-block;transform:translate(0.50px,0.13px) scaleX(0.7790) rotate(0.03deg);transform-origin:center center">102.57</span></div>
<div style="position:absolute;left:-89px;top:544px;width:400px;height:20px;text-align:center;font-size:10.0px;line-height:20px;color:#1a1a1a;white-space:pre;"><span style="display:inline-block;transform:translate(0.55px,0.57px) scaleX(0.7790) rotate(0.03deg);transform-origin:center center">109.56</span></div>
<div style="position:absolute;left:8px;top:544px;width:400px;height:20px;text-align:center;font-size:10.0px;line-height:20px;color:#1a1a1a;white-space:pre;"><span style="display:inline-block;transform:translate(0.50px,0.57px) scaleX(0.7790) rotate(0.03deg);transform-origin:center center">99.50</span></div>
<div style="position:absolute;left:-89px;top:570px;width:400px;height:20px;text-align:center;font-size:10.0px;line-height:20px;color:#1a1a1a;white-space:pre;"><span style="display:inline-block;transform:translate(0.55px,0.01px) scaleX(0.7790) rotate(0.03deg);transform-origin:center center">84.72</span></div>
<div style="position:absolute;left:8px;top:570px;width:400px;height:20px;text-align:center;font-size:10.0px;line-height:20px;color:#1a1a1a;white-space:pre;"><span style="display:inline-block;transform:translate(0.50px,0.01px) scaleX(0.7790) rotate(0.03deg);transform-origin:center center">99.50</span></div>
<div style="position:absolute;left:-89px;top:595px;width:400px;height:20px;text-align:center;font-size:10.0px;line-height:20px;color:#1a1a1a;white-space:pre;"><span style="display:inline-block;transform:translate(0.55px,0.45px) scaleX(0.7790) rotate(0.03deg);transform-origin:center center">79.08</span></div>
<div style="position:absolute;left:8px;top:595px;width:400px;height:20px;text-align:center;font-size:10.0px;line-height:20px;color:#1a1a1a;white-space:pre;"><span style="display:inline-block;transform:translate(0.50px,0.45px) scaleX(0.7790) rotate(0.03deg);transform-origin:center center">79.08</span></div>
<div style="position:absolute;left:-89px;top:620px;width:400px;height:20px;text-align:center;font-size:10.0px;line-height:20px;color:#1a1a1a;white-space:pre;"><span style="display:inline-block;transform:translate(0.55px,0.89px) scaleX(0.7790) rotate(0.03deg);transform-origin:center center">155.93</span></div>
<div style="position:absolute;left:8px;top:620px;width:400px;height:20px;text-align:center;font-size:10.0px;line-height:20px;color:#1a1a1a;white-space:pre;"><span style="display:inline-block;transform:translate(0.50px,0.89px) scaleX(0.7790) rotate(0.03deg);transform-origin:center center">137.15</span></div>
<div style="position:absolute;left:82px;top:417px;width:400px;height:20px;text-align:center;font-size:10.0px;line-height:20px;color:#1a1a1a;white-space:pre;"><span style="display:inline-block;transform:translate(0.45px,0.37px) scaleX(0.7790) rotate(0.03deg);transform-origin:center center">2(3X477)</span></div>
<div style="position:absolute;left:82px;top:442px;width:400px;height:20px;text-align:center;font-size:10.0px;line-height:20px;color:#1a1a1a;white-space:pre;"><span style="display:inline-block;transform:translate(0.45px,0.81px) scaleX(0.7790) rotate(0.03deg);transform-origin:center center">YEŞİLIRMAK</span></div>
</body></html>
